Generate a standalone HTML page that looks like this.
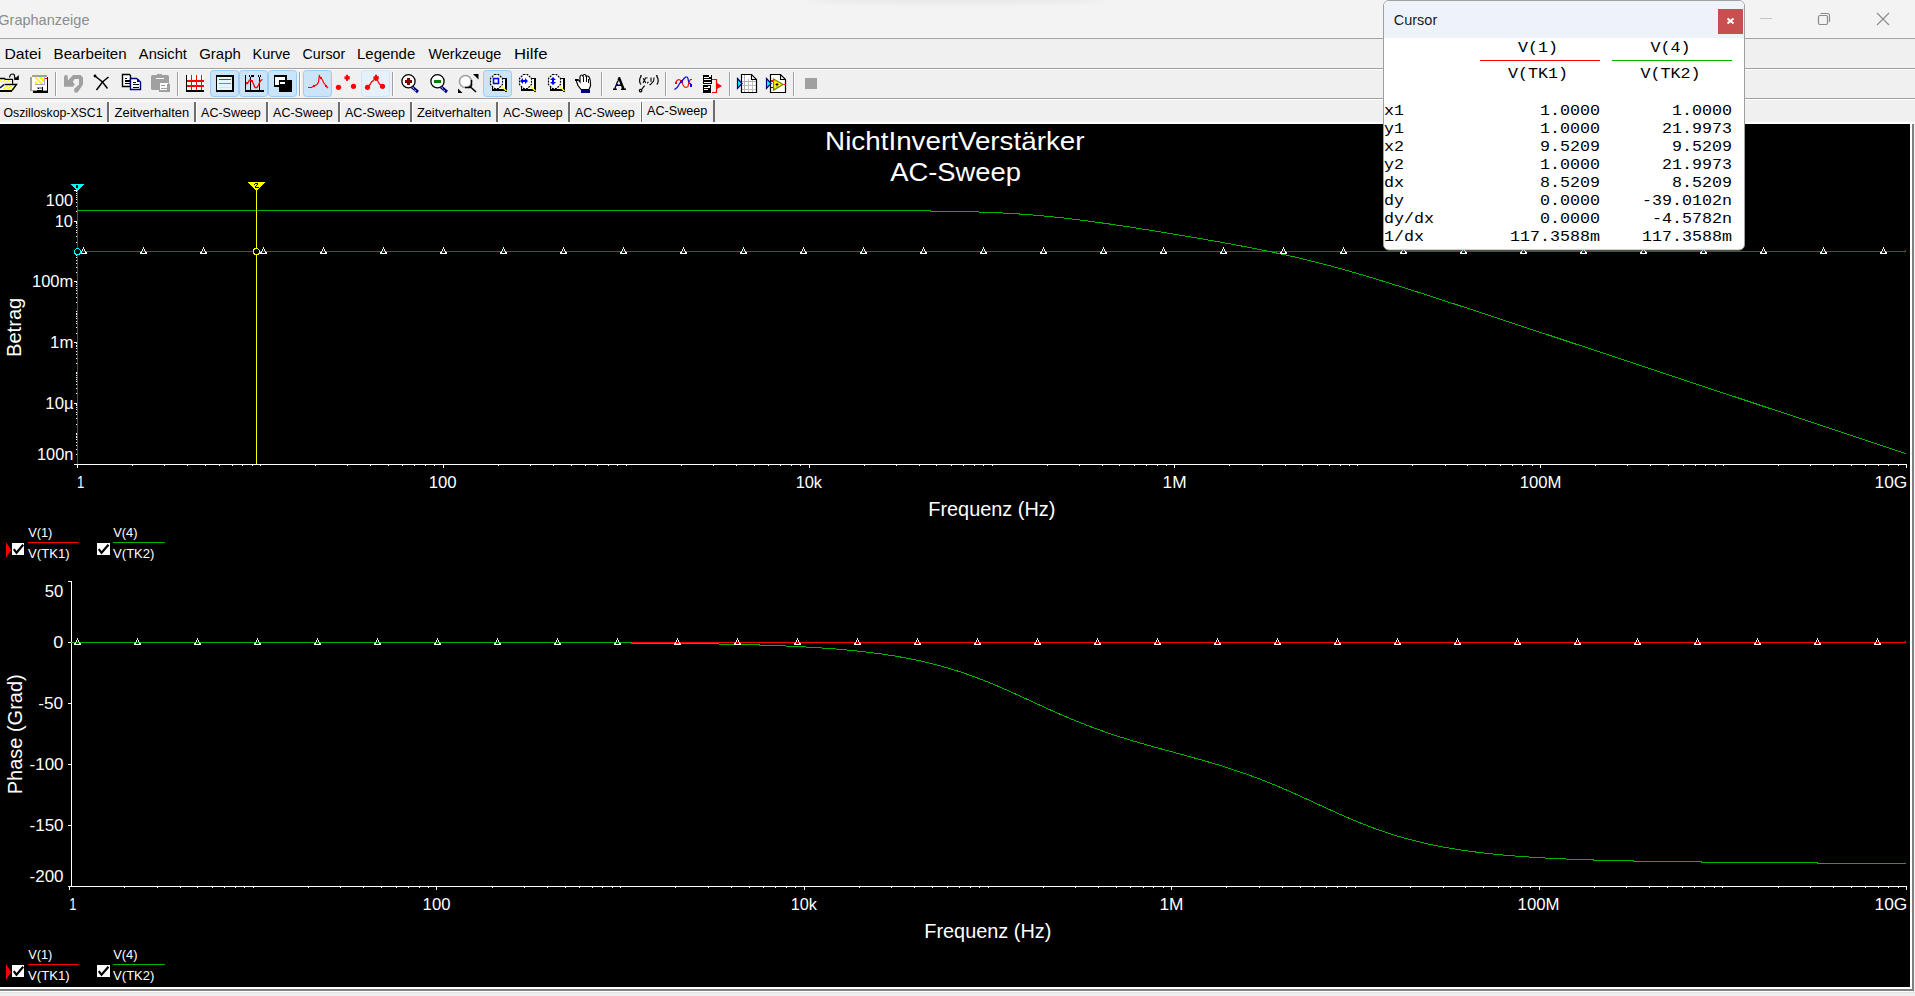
<!DOCTYPE html>
<html><head><meta charset="utf-8"><title>Graphanzeige</title>
<style>html,body{margin:0;padding:0;width:1915px;height:996px;overflow:hidden;background:#f0f0f0}svg{display:block}text{white-space:pre}</style>
</head><body>
<svg width="1915" height="996" viewBox="0 0 1915 996">
<rect x="0" y="0" width="1915" height="38" fill="#f3f3f3" />
<rect x="0" y="37" width="1915" height="1" fill="#f7f7f7" />
<defs><filter id="blr" x="-50%" y="-200%" width="200%" height="500%"><feGaussianBlur stdDeviation="4 3"/></filter></defs>
<ellipse cx="955" cy="-1" rx="150" ry="4" fill="#000" opacity="0.05" filter="url(#blr)"/>
<rect x="0" y="38" width="1915" height="1" fill="#a0a0a0" />
<rect x="0" y="39" width="1915" height="29" fill="#f0f0f0" />
<text x="-1.73" y="25" font-family="Liberation Sans" font-size="15" fill="#8c8c8c" textLength="91.17" lengthAdjust="spacingAndGlyphs" >Graphanzeige</text>
<rect x="1760" y="18" width="12" height="1" fill="#c5c5c5" />
<path d="M1820.5 13.5 H1827.5 A2 2 0 0 1 1829.5 15.5 V22" fill="none" stroke="#8a8a8a" stroke-width="1.1"/>
<rect x="1818.5" y="15.5" width="9" height="9" rx="1.5" fill="none" stroke="#8a8a8a" stroke-width="1.2"/>
<path d="M1877 13 L1889 25 M1889 13 L1877 25" stroke="#8a8a8a" stroke-width="1.1"/>
<text x="4.51" y="59" font-family="Liberation Sans" font-size="15" fill="#000000" textLength="36.75" lengthAdjust="spacingAndGlyphs" >Datei</text>
<text x="53.56" y="59" font-family="Liberation Sans" font-size="15" fill="#000000" textLength="73.12" lengthAdjust="spacingAndGlyphs" >Bearbeiten</text>
<text x="138.87" y="59" font-family="Liberation Sans" font-size="15" fill="#000000" textLength="48.04" lengthAdjust="spacingAndGlyphs" >Ansicht</text>
<text x="199.25" y="59" font-family="Liberation Sans" font-size="15" fill="#000000" textLength="41.52" lengthAdjust="spacingAndGlyphs" >Graph</text>
<text x="252.51" y="59" font-family="Liberation Sans" font-size="15" fill="#000000" textLength="37.94" lengthAdjust="spacingAndGlyphs" >Kurve</text>
<text x="302.48" y="59" font-family="Liberation Sans" font-size="15" fill="#000000" textLength="42.76" lengthAdjust="spacingAndGlyphs" >Cursor</text>
<text x="357.07" y="59" font-family="Liberation Sans" font-size="15" fill="#000000" textLength="58.19" lengthAdjust="spacingAndGlyphs" >Legende</text>
<text x="428.44" y="59" font-family="Liberation Sans" font-size="15" fill="#000000" textLength="72.90" lengthAdjust="spacingAndGlyphs" >Werkzeuge</text>
<text x="514.03" y="59" font-family="Liberation Sans" font-size="15" fill="#000000" textLength="33.41" lengthAdjust="spacingAndGlyphs" >Hilfe</text>
<rect x="0" y="68" width="1915" height="1" fill="#a0a0a0" />
<rect x="0" y="69" width="1915" height="1" fill="#ffffff" />
<rect x="0" y="70" width="1915" height="28" fill="#f0f0f0" />
<rect x="0" y="98" width="1915" height="1" fill="#a0a0a0" />
<rect x="0" y="99" width="1915" height="1" fill="#ffffff" />
<rect x="0" y="100" width="1915" height="24" fill="#f0f0f0" />
<rect x="0" y="101" width="640" height="1" fill="#ffffff" />
<text x="3.52" y="117" font-family="Liberation Sans" font-size="13" fill="#000000" textLength="98.98" lengthAdjust="spacingAndGlyphs" >Oszilloskop-XSC1</text>
<rect x="107" y="102" width="2" height="20" fill="#6d6d6d" />
<rect x="109" y="102" width="1" height="20" fill="#ffffff" />
<text x="114.59" y="117" font-family="Liberation Sans" font-size="13" fill="#000000" textLength="74.55" lengthAdjust="spacingAndGlyphs" >Zeitverhalten</text>
<rect x="194" y="102" width="2" height="20" fill="#6d6d6d" />
<rect x="196" y="102" width="1" height="20" fill="#ffffff" />
<text x="201.08" y="117" font-family="Liberation Sans" font-size="13" fill="#000000" textLength="59.75" lengthAdjust="spacingAndGlyphs" >AC-Sweep</text>
<rect x="266" y="102" width="2" height="20" fill="#6d6d6d" />
<rect x="268" y="102" width="1" height="20" fill="#ffffff" />
<text x="273.08" y="117" font-family="Liberation Sans" font-size="13" fill="#000000" textLength="59.75" lengthAdjust="spacingAndGlyphs" >AC-Sweep</text>
<rect x="338" y="102" width="2" height="20" fill="#6d6d6d" />
<rect x="340" y="102" width="1" height="20" fill="#ffffff" />
<text x="344.98" y="117" font-family="Liberation Sans" font-size="13" fill="#000000" textLength="60.05" lengthAdjust="spacingAndGlyphs" >AC-Sweep</text>
<rect x="410" y="102" width="2" height="20" fill="#6d6d6d" />
<rect x="412" y="102" width="1" height="20" fill="#ffffff" />
<text x="416.89" y="117" font-family="Liberation Sans" font-size="13" fill="#000000" textLength="74.24" lengthAdjust="spacingAndGlyphs" >Zeitverhalten</text>
<rect x="496" y="102" width="2" height="20" fill="#6d6d6d" />
<rect x="498" y="102" width="1" height="20" fill="#ffffff" />
<text x="503.28" y="117" font-family="Liberation Sans" font-size="13" fill="#000000" textLength="59.45" lengthAdjust="spacingAndGlyphs" >AC-Sweep</text>
<rect x="568" y="102" width="2" height="20" fill="#6d6d6d" />
<rect x="570" y="102" width="1" height="20" fill="#ffffff" />
<text x="574.98" y="117" font-family="Liberation Sans" font-size="13" fill="#000000" textLength="59.75" lengthAdjust="spacingAndGlyphs" >AC-Sweep</text>
<rect x="640" y="102" width="2" height="20" fill="#6d6d6d" />
<rect x="642" y="102" width="1" height="20" fill="#ffffff" />
<rect x="640" y="100" width="74" height="1" fill="#ffffff" />
<rect x="640" y="100" width="1" height="22" fill="#ffffff" />
<text x="646.98" y="115" font-family="Liberation Sans" font-size="13" fill="#000000" textLength="60.35" lengthAdjust="spacingAndGlyphs" >AC-Sweep</text>
<rect x="713" y="100" width="2" height="22" fill="#6d6d6d" />
<rect x="0" y="122" width="1915" height="2" fill="#ffffff" />
<rect x="0" y="124" width="1910" height="863" fill="#000000" />
<rect x="1910" y="124" width="2" height="865" fill="#ffffff" />
<rect x="1912" y="124" width="2" height="867" fill="#808080" />
<rect x="0" y="987" width="1912" height="2" fill="#ffffff" />
<rect x="0" y="989" width="1914" height="2" fill="#808080" />
<rect x="0" y="991" width="1915" height="1" fill="#ffffff" />
<rect x="0" y="992" width="1915" height="1" fill="#e3e3e3" />
<rect x="0" y="993" width="1915" height="3" fill="#f0f0f0" />
<text x="825.13" y="150" font-family="Liberation Sans" font-size="26" fill="#ffffff" textLength="259.42" lengthAdjust="spacingAndGlyphs" >NichtInvertVerstärker</text>
<text x="890.25" y="181" font-family="Liberation Sans" font-size="26" fill="#ffffff" textLength="130.70" lengthAdjust="spacingAndGlyphs" >AC-Sweep</text>
<rect x="74" y="464" width="1833" height="1" fill="#ffffff" />
<rect x="77" y="465" width="1" height="3" fill="#ffffff" />
<rect x="132" y="465" width="1" height="1" fill="#ffffff" />
<rect x="164" y="465" width="1" height="1" fill="#ffffff" />
<rect x="187" y="465" width="1" height="1" fill="#ffffff" />
<rect x="205" y="465" width="1" height="1" fill="#ffffff" />
<rect x="219" y="465" width="1" height="1" fill="#ffffff" />
<rect x="232" y="465" width="1" height="1" fill="#ffffff" />
<rect x="242" y="465" width="1" height="1" fill="#ffffff" />
<rect x="252" y="465" width="1" height="1" fill="#ffffff" />
<rect x="260" y="465" width="1" height="1" fill="#ffffff" />
<rect x="315" y="465" width="1" height="1" fill="#ffffff" />
<rect x="347" y="465" width="1" height="1" fill="#ffffff" />
<rect x="370" y="465" width="1" height="1" fill="#ffffff" />
<rect x="388" y="465" width="1" height="1" fill="#ffffff" />
<rect x="402" y="465" width="1" height="1" fill="#ffffff" />
<rect x="414" y="465" width="1" height="1" fill="#ffffff" />
<rect x="425" y="465" width="1" height="1" fill="#ffffff" />
<rect x="434" y="465" width="1" height="1" fill="#ffffff" />
<rect x="443" y="465" width="1" height="3" fill="#ffffff" />
<rect x="498" y="465" width="1" height="1" fill="#ffffff" />
<rect x="530" y="465" width="1" height="1" fill="#ffffff" />
<rect x="553" y="465" width="1" height="1" fill="#ffffff" />
<rect x="571" y="465" width="1" height="1" fill="#ffffff" />
<rect x="585" y="465" width="1" height="1" fill="#ffffff" />
<rect x="597" y="465" width="1" height="1" fill="#ffffff" />
<rect x="608" y="465" width="1" height="1" fill="#ffffff" />
<rect x="617" y="465" width="1" height="1" fill="#ffffff" />
<rect x="626" y="465" width="1" height="1" fill="#ffffff" />
<rect x="681" y="465" width="1" height="1" fill="#ffffff" />
<rect x="713" y="465" width="1" height="1" fill="#ffffff" />
<rect x="736" y="465" width="1" height="1" fill="#ffffff" />
<rect x="754" y="465" width="1" height="1" fill="#ffffff" />
<rect x="768" y="465" width="1" height="1" fill="#ffffff" />
<rect x="780" y="465" width="1" height="1" fill="#ffffff" />
<rect x="791" y="465" width="1" height="1" fill="#ffffff" />
<rect x="800" y="465" width="1" height="1" fill="#ffffff" />
<rect x="809" y="465" width="1" height="3" fill="#ffffff" />
<rect x="864" y="465" width="1" height="1" fill="#ffffff" />
<rect x="896" y="465" width="1" height="1" fill="#ffffff" />
<rect x="919" y="465" width="1" height="1" fill="#ffffff" />
<rect x="936" y="465" width="1" height="1" fill="#ffffff" />
<rect x="951" y="465" width="1" height="1" fill="#ffffff" />
<rect x="963" y="465" width="1" height="1" fill="#ffffff" />
<rect x="974" y="465" width="1" height="1" fill="#ffffff" />
<rect x="983" y="465" width="1" height="1" fill="#ffffff" />
<rect x="992" y="465" width="1" height="1" fill="#ffffff" />
<rect x="1047" y="465" width="1" height="1" fill="#ffffff" />
<rect x="1079" y="465" width="1" height="1" fill="#ffffff" />
<rect x="1102" y="465" width="1" height="1" fill="#ffffff" />
<rect x="1119" y="465" width="1" height="1" fill="#ffffff" />
<rect x="1134" y="465" width="1" height="1" fill="#ffffff" />
<rect x="1146" y="465" width="1" height="1" fill="#ffffff" />
<rect x="1157" y="465" width="1" height="1" fill="#ffffff" />
<rect x="1166" y="465" width="1" height="1" fill="#ffffff" />
<rect x="1174" y="465" width="1" height="3" fill="#ffffff" />
<rect x="1229" y="465" width="1" height="1" fill="#ffffff" />
<rect x="1262" y="465" width="1" height="1" fill="#ffffff" />
<rect x="1285" y="465" width="1" height="1" fill="#ffffff" />
<rect x="1302" y="465" width="1" height="1" fill="#ffffff" />
<rect x="1317" y="465" width="1" height="1" fill="#ffffff" />
<rect x="1329" y="465" width="1" height="1" fill="#ffffff" />
<rect x="1340" y="465" width="1" height="1" fill="#ffffff" />
<rect x="1349" y="465" width="1" height="1" fill="#ffffff" />
<rect x="1357" y="465" width="1" height="1" fill="#ffffff" />
<rect x="1412" y="465" width="1" height="1" fill="#ffffff" />
<rect x="1445" y="465" width="1" height="1" fill="#ffffff" />
<rect x="1467" y="465" width="1" height="1" fill="#ffffff" />
<rect x="1485" y="465" width="1" height="1" fill="#ffffff" />
<rect x="1500" y="465" width="1" height="1" fill="#ffffff" />
<rect x="1512" y="465" width="1" height="1" fill="#ffffff" />
<rect x="1522" y="465" width="1" height="1" fill="#ffffff" />
<rect x="1532" y="465" width="1" height="1" fill="#ffffff" />
<rect x="1540" y="465" width="1" height="3" fill="#ffffff" />
<rect x="1595" y="465" width="1" height="1" fill="#ffffff" />
<rect x="1627" y="465" width="1" height="1" fill="#ffffff" />
<rect x="1650" y="465" width="1" height="1" fill="#ffffff" />
<rect x="1668" y="465" width="1" height="1" fill="#ffffff" />
<rect x="1683" y="465" width="1" height="1" fill="#ffffff" />
<rect x="1695" y="465" width="1" height="1" fill="#ffffff" />
<rect x="1705" y="465" width="1" height="1" fill="#ffffff" />
<rect x="1715" y="465" width="1" height="1" fill="#ffffff" />
<rect x="1723" y="465" width="1" height="1" fill="#ffffff" />
<rect x="1778" y="465" width="1" height="1" fill="#ffffff" />
<rect x="1810" y="465" width="1" height="1" fill="#ffffff" />
<rect x="1833" y="465" width="1" height="1" fill="#ffffff" />
<rect x="1851" y="465" width="1" height="1" fill="#ffffff" />
<rect x="1865" y="465" width="1" height="1" fill="#ffffff" />
<rect x="1878" y="465" width="1" height="1" fill="#ffffff" />
<rect x="1888" y="465" width="1" height="1" fill="#ffffff" />
<rect x="1898" y="465" width="1" height="1" fill="#ffffff" />
<rect x="1906" y="465" width="1" height="3" fill="#ffffff" />
<rect x="74" y="464" width="3" height="1" fill="#ffffff" />
<rect x="76" y="454" width="1" height="1" fill="#ffffff" />
<rect x="76" y="449" width="1" height="1" fill="#ffffff" />
<rect x="76" y="445" width="1" height="1" fill="#ffffff" />
<rect x="76" y="442" width="1" height="1" fill="#ffffff" />
<rect x="76" y="439" width="1" height="1" fill="#ffffff" />
<rect x="76" y="437" width="1" height="1" fill="#ffffff" />
<rect x="76" y="436" width="1" height="1" fill="#ffffff" />
<rect x="76" y="434" width="1" height="1" fill="#ffffff" />
<rect x="76" y="433" width="1" height="1" fill="#ffffff" />
<rect x="76" y="424" width="1" height="1" fill="#ffffff" />
<rect x="76" y="418" width="1" height="1" fill="#ffffff" />
<rect x="76" y="414" width="1" height="1" fill="#ffffff" />
<rect x="76" y="412" width="1" height="1" fill="#ffffff" />
<rect x="76" y="409" width="1" height="1" fill="#ffffff" />
<rect x="76" y="407" width="1" height="1" fill="#ffffff" />
<rect x="76" y="405" width="1" height="1" fill="#ffffff" />
<rect x="76" y="404" width="1" height="1" fill="#ffffff" />
<rect x="74" y="403" width="3" height="1" fill="#ffffff" />
<rect x="76" y="393" width="1" height="1" fill="#ffffff" />
<rect x="76" y="388" width="1" height="1" fill="#ffffff" />
<rect x="76" y="384" width="1" height="1" fill="#ffffff" />
<rect x="76" y="381" width="1" height="1" fill="#ffffff" />
<rect x="76" y="379" width="1" height="1" fill="#ffffff" />
<rect x="76" y="377" width="1" height="1" fill="#ffffff" />
<rect x="76" y="375" width="1" height="1" fill="#ffffff" />
<rect x="76" y="373" width="1" height="1" fill="#ffffff" />
<rect x="76" y="372" width="1" height="1" fill="#ffffff" />
<rect x="76" y="363" width="1" height="1" fill="#ffffff" />
<rect x="76" y="358" width="1" height="1" fill="#ffffff" />
<rect x="76" y="354" width="1" height="1" fill="#ffffff" />
<rect x="76" y="351" width="1" height="1" fill="#ffffff" />
<rect x="76" y="348" width="1" height="1" fill="#ffffff" />
<rect x="76" y="346" width="1" height="1" fill="#ffffff" />
<rect x="76" y="345" width="1" height="1" fill="#ffffff" />
<rect x="76" y="343" width="1" height="1" fill="#ffffff" />
<rect x="74" y="342" width="3" height="1" fill="#ffffff" />
<rect x="76" y="333" width="1" height="1" fill="#ffffff" />
<rect x="76" y="327" width="1" height="1" fill="#ffffff" />
<rect x="76" y="323" width="1" height="1" fill="#ffffff" />
<rect x="76" y="321" width="1" height="1" fill="#ffffff" />
<rect x="76" y="318" width="1" height="1" fill="#ffffff" />
<rect x="76" y="316" width="1" height="1" fill="#ffffff" />
<rect x="76" y="314" width="1" height="1" fill="#ffffff" />
<rect x="76" y="313" width="1" height="1" fill="#ffffff" />
<rect x="76" y="311" width="1" height="1" fill="#ffffff" />
<rect x="76" y="302" width="1" height="1" fill="#ffffff" />
<rect x="76" y="297" width="1" height="1" fill="#ffffff" />
<rect x="76" y="293" width="1" height="1" fill="#ffffff" />
<rect x="76" y="290" width="1" height="1" fill="#ffffff" />
<rect x="76" y="288" width="1" height="1" fill="#ffffff" />
<rect x="76" y="286" width="1" height="1" fill="#ffffff" />
<rect x="76" y="284" width="1" height="1" fill="#ffffff" />
<rect x="76" y="282" width="1" height="1" fill="#ffffff" />
<rect x="74" y="281" width="3" height="1" fill="#ffffff" />
<rect x="76" y="272" width="1" height="1" fill="#ffffff" />
<rect x="76" y="267" width="1" height="1" fill="#ffffff" />
<rect x="76" y="263" width="1" height="1" fill="#ffffff" />
<rect x="76" y="260" width="1" height="1" fill="#ffffff" />
<rect x="76" y="257" width="1" height="1" fill="#ffffff" />
<rect x="76" y="255" width="1" height="1" fill="#ffffff" />
<rect x="76" y="254" width="1" height="1" fill="#ffffff" />
<rect x="76" y="252" width="1" height="1" fill="#ffffff" />
<rect x="76" y="251" width="1" height="1" fill="#ffffff" />
<rect x="76" y="242" width="1" height="1" fill="#ffffff" />
<rect x="76" y="236" width="1" height="1" fill="#ffffff" />
<rect x="76" y="232" width="1" height="1" fill="#ffffff" />
<rect x="76" y="230" width="1" height="1" fill="#ffffff" />
<rect x="76" y="227" width="1" height="1" fill="#ffffff" />
<rect x="76" y="225" width="1" height="1" fill="#ffffff" />
<rect x="76" y="223" width="1" height="1" fill="#ffffff" />
<rect x="76" y="222" width="1" height="1" fill="#ffffff" />
<rect x="74" y="221" width="3" height="1" fill="#ffffff" />
<rect x="76" y="211" width="1" height="1" fill="#ffffff" />
<rect x="76" y="206" width="1" height="1" fill="#ffffff" />
<rect x="76" y="202" width="1" height="1" fill="#ffffff" />
<rect x="76" y="199" width="1" height="1" fill="#ffffff" />
<rect x="76" y="197" width="1" height="1" fill="#ffffff" />
<rect x="76" y="195" width="1" height="1" fill="#ffffff" />
<rect x="76" y="193" width="1" height="1" fill="#ffffff" />
<rect x="76" y="191" width="1" height="1" fill="#ffffff" />
<rect x="74" y="190" width="3" height="1" fill="#ffffff" />
<text x="45.86" y="206" font-family="Liberation Sans" font-size="16" fill="#ffffff" textLength="27.18" lengthAdjust="spacingAndGlyphs" >100</text>
<text x="54.65" y="227" font-family="Liberation Sans" font-size="16" fill="#ffffff" textLength="18.18" lengthAdjust="spacingAndGlyphs" >10</text>
<text x="31.94" y="287" font-family="Liberation Sans" font-size="16" fill="#ffffff" textLength="41.35" lengthAdjust="spacingAndGlyphs" >100m</text>
<text x="50.12" y="348" font-family="Liberation Sans" font-size="16" fill="#ffffff" textLength="23.28" lengthAdjust="spacingAndGlyphs" >1m</text>
<text x="45.33" y="409" font-family="Liberation Sans" font-size="16" fill="#ffffff" textLength="28.26" lengthAdjust="spacingAndGlyphs" >10µ</text>
<text x="37.06" y="460" font-family="Liberation Sans" font-size="16" fill="#ffffff" textLength="36.30" lengthAdjust="spacingAndGlyphs" >100n</text>
<text x="76.99" y="488" font-family="Liberation Sans" font-size="16" fill="#ffffff" textLength="7.35" lengthAdjust="spacingAndGlyphs" >1</text>
<text x="428.72" y="488" font-family="Liberation Sans" font-size="16" fill="#ffffff" textLength="27.93" lengthAdjust="spacingAndGlyphs" >100</text>
<text x="795.65" y="488" font-family="Liberation Sans" font-size="16" fill="#ffffff" textLength="26.42" lengthAdjust="spacingAndGlyphs" >10k</text>
<text x="1162.58" y="488" font-family="Liberation Sans" font-size="16" fill="#ffffff" textLength="24.04" lengthAdjust="spacingAndGlyphs" >1M</text>
<text x="1519.73" y="488" font-family="Liberation Sans" font-size="16" fill="#ffffff" textLength="41.74" lengthAdjust="spacingAndGlyphs" >100M</text>
<text x="1874.58" y="488" font-family="Liberation Sans" font-size="16" fill="#ffffff" textLength="32.71" lengthAdjust="spacingAndGlyphs" >10G</text>
<text x="928.27" y="516" font-family="Liberation Sans" font-size="20" fill="#ffffff" textLength="127.06" lengthAdjust="spacingAndGlyphs" >Frequenz (Hz)</text>
<text x="-357.05" y="21.3" font-family="Liberation Sans" font-size="21" fill="#ffffff" textLength="59.35" lengthAdjust="spacingAndGlyphs" transform="rotate(-90)">Betrag</text>
<rect x="77" y="251" width="1829" height="1" fill="#ff0000" />
<rect x="1905" y="250" width="1" height="1" fill="#ff0000" />
<rect x="77" y="190" width="1" height="274" fill="#ff0000" />
<polyline points="77.00,210.53 79.50,210.53 81.50,210.53 83.50,210.53 85.50,210.53 87.50,210.53 89.50,210.53 91.50,210.53 93.50,210.53 95.50,210.53 97.50,210.53 99.50,210.53 101.50,210.53 103.50,210.53 105.50,210.53 107.50,210.53 109.50,210.53 111.50,210.53 113.50,210.53 115.50,210.53 117.50,210.53 119.50,210.53 121.50,210.53 123.50,210.53 125.50,210.53 127.50,210.53 129.50,210.53 131.50,210.53 133.50,210.53 135.50,210.53 137.50,210.53 139.50,210.53 141.50,210.53 143.50,210.53 145.50,210.53 147.50,210.53 149.50,210.53 151.50,210.53 153.50,210.53 155.50,210.53 157.50,210.53 159.50,210.53 161.50,210.53 163.50,210.53 165.50,210.53 167.50,210.53 169.50,210.53 171.50,210.53 173.50,210.53 175.50,210.53 177.50,210.53 179.50,210.53 181.50,210.53 183.50,210.53 185.50,210.53 187.50,210.53 189.50,210.53 191.50,210.53 193.50,210.53 195.50,210.53 197.50,210.53 199.50,210.53 201.50,210.53 203.50,210.53 205.50,210.53 207.50,210.53 209.50,210.53 211.50,210.53 213.50,210.53 215.50,210.53 217.50,210.53 219.50,210.53 221.50,210.53 223.50,210.53 225.50,210.53 227.50,210.53 229.50,210.53 231.50,210.53 233.50,210.53 235.50,210.53 237.50,210.53 239.50,210.53 241.50,210.53 243.50,210.53 245.50,210.53 247.50,210.53 249.50,210.53 251.50,210.53 253.50,210.53 255.50,210.53 257.50,210.53 259.50,210.53 261.50,210.53 263.50,210.53 265.50,210.53 267.50,210.53 269.50,210.53 271.50,210.53 273.50,210.53 275.50,210.53 277.50,210.53 279.50,210.53 281.50,210.53 283.50,210.53 285.50,210.53 287.50,210.53 289.50,210.53 291.50,210.53 293.50,210.53 295.50,210.53 297.50,210.53 299.50,210.53 301.50,210.53 303.50,210.53 305.50,210.53 307.50,210.53 309.50,210.53 311.50,210.53 313.50,210.53 315.50,210.53 317.50,210.53 319.50,210.53 321.50,210.53 323.50,210.53 325.50,210.53 327.50,210.53 329.50,210.53 331.50,210.53 333.50,210.53 335.50,210.53 337.50,210.53 339.50,210.53 341.50,210.53 343.50,210.53 345.50,210.53 347.50,210.53 349.50,210.53 351.50,210.53 353.50,210.53 355.50,210.53 357.50,210.53 359.50,210.53 361.50,210.53 363.50,210.53 365.50,210.53 367.50,210.53 369.50,210.53 371.50,210.53 373.50,210.53 375.50,210.53 377.50,210.53 379.50,210.53 381.50,210.53 383.50,210.53 385.50,210.53 387.50,210.53 389.50,210.53 391.50,210.53 393.50,210.53 395.50,210.53 397.50,210.53 399.50,210.53 401.50,210.53 403.50,210.53 405.50,210.53 407.50,210.53 409.50,210.53 411.50,210.53 413.50,210.53 415.50,210.53 417.50,210.53 419.50,210.53 421.50,210.53 423.50,210.53 425.50,210.53 427.50,210.53 429.50,210.53 431.50,210.53 433.50,210.53 435.50,210.53 437.50,210.53 439.50,210.53 441.50,210.53 443.50,210.53 445.50,210.53 447.50,210.53 449.50,210.53 451.50,210.53 453.50,210.53 455.50,210.53 457.50,210.53 459.50,210.53 461.50,210.53 463.50,210.53 465.50,210.53 467.50,210.53 469.50,210.53 471.50,210.53 473.50,210.53 475.50,210.53 477.50,210.53 479.50,210.53 481.50,210.53 483.50,210.53 485.50,210.53 487.50,210.53 489.50,210.53 491.50,210.53 493.50,210.53 495.50,210.53 497.50,210.53 499.50,210.53 501.50,210.53 503.50,210.53 505.50,210.53 507.50,210.53 509.50,210.53 511.50,210.53 513.50,210.53 515.50,210.53 517.50,210.53 519.50,210.53 521.50,210.53 523.50,210.53 525.50,210.53 527.50,210.53 529.50,210.53 531.50,210.53 533.50,210.53 535.50,210.53 537.50,210.53 539.50,210.53 541.50,210.53 543.50,210.53 545.50,210.53 547.50,210.53 549.50,210.53 551.50,210.53 553.50,210.53 555.50,210.53 557.50,210.53 559.50,210.53 561.50,210.53 563.50,210.53 565.50,210.53 567.50,210.53 569.50,210.53 571.50,210.53 573.50,210.53 575.50,210.53 577.50,210.53 579.50,210.53 581.50,210.53 583.50,210.53 585.50,210.53 587.50,210.53 589.50,210.53 591.50,210.53 593.50,210.53 595.50,210.53 597.50,210.53 599.50,210.53 601.50,210.53 603.50,210.53 605.50,210.53 607.50,210.53 609.50,210.53 611.50,210.53 613.50,210.53 615.50,210.53 617.50,210.53 619.50,210.53 621.50,210.53 623.50,210.53 625.50,210.53 627.50,210.53 629.50,210.53 631.50,210.53 633.50,210.53 635.50,210.53 637.50,210.53 639.50,210.53 641.50,210.53 643.50,210.53 645.50,210.53 647.50,210.53 649.50,210.53 651.50,210.53 653.50,210.53 655.50,210.53 657.50,210.53 659.50,210.53 661.50,210.53 663.50,210.53 665.50,210.53 667.50,210.53 669.50,210.54 671.50,210.54 673.50,210.54 675.50,210.54 677.50,210.54 679.50,210.54 681.50,210.54 683.50,210.54 685.50,210.54 687.50,210.54 689.50,210.54 691.50,210.54 693.50,210.54 695.50,210.54 697.50,210.54 699.50,210.54 701.50,210.54 703.50,210.54 705.50,210.54 707.50,210.54 709.50,210.54 711.50,210.54 713.50,210.54 715.50,210.54 717.50,210.54 719.50,210.54 721.50,210.54 723.50,210.54 725.50,210.54 727.50,210.54 729.50,210.54 731.50,210.54 733.50,210.54 735.50,210.54 737.50,210.54 739.50,210.54 741.50,210.54 743.50,210.54 745.50,210.54 747.50,210.54 749.50,210.54 751.50,210.54 753.50,210.54 755.50,210.54 757.50,210.54 759.50,210.54 761.50,210.54 763.50,210.54 765.50,210.54 767.50,210.54 769.50,210.54 771.50,210.54 773.50,210.54 775.50,210.54 777.50,210.54 779.50,210.55 781.50,210.55 783.50,210.55 785.50,210.55 787.50,210.55 789.50,210.55 791.50,210.55 793.50,210.55 795.50,210.55 797.50,210.55 799.50,210.55 801.50,210.55 803.50,210.55 805.50,210.56 807.50,210.56 809.50,210.56 811.50,210.56 813.50,210.56 815.50,210.56 817.50,210.56 819.50,210.56 821.50,210.57 823.50,210.57 825.50,210.57 827.50,210.57 829.50,210.57 831.50,210.57 833.50,210.58 835.50,210.58 837.50,210.58 839.50,210.58 841.50,210.59 843.50,210.59 845.50,210.59 847.50,210.59 849.50,210.60 851.50,210.60 853.50,210.60 855.50,210.61 857.50,210.61 859.50,210.62 861.50,210.62 863.50,210.62 865.50,210.63 867.50,210.63 869.50,210.64 871.50,210.64 873.50,210.65 875.50,210.66 877.50,210.66 879.50,210.67 881.50,210.67 883.50,210.68 885.50,210.69 887.50,210.70 889.50,210.71 891.50,210.71 893.50,210.72 895.50,210.73 897.50,210.74 899.50,210.75 901.50,210.76 903.50,210.78 905.50,210.79 907.50,210.80 909.50,210.82 911.50,210.83 913.50,210.84 915.50,210.86 917.50,210.88 919.50,210.89 921.50,210.91 923.50,210.93 925.50,210.95 927.50,210.97 929.50,210.99 931.50,211.02 933.50,211.04 935.50,211.06 937.50,211.09 939.50,211.12 941.50,211.15 943.50,211.18 945.50,211.21 947.50,211.24 949.50,211.28 951.50,211.31 953.50,211.35 955.50,211.39 957.50,211.43 959.50,211.47 961.50,211.52 963.50,211.57 965.50,211.62 967.50,211.67 969.50,211.72 971.50,211.78 973.50,211.83 975.50,211.89 977.50,211.96 979.50,212.02 981.50,212.09 983.50,212.16 985.50,212.24 987.50,212.31 989.50,212.39 991.50,212.48 993.50,212.56 995.50,212.65 997.50,212.75 999.50,212.84 1001.50,212.94 1003.50,213.05 1005.50,213.15 1007.50,213.26 1009.50,213.38 1011.50,213.50 1013.50,213.62 1015.50,213.75 1017.50,213.88 1019.50,214.01 1021.50,214.15 1023.50,214.29 1025.50,214.44 1027.50,214.59 1029.50,214.74 1031.50,214.90 1033.50,215.06 1035.50,215.23 1037.50,215.40 1039.50,215.58 1041.50,215.76 1043.50,215.94 1045.50,216.13 1047.50,216.32 1049.50,216.52 1051.50,216.72 1053.50,216.92 1055.50,217.13 1057.50,217.34 1059.50,217.56 1061.50,217.78 1063.50,218.00 1065.50,218.23 1067.50,218.46 1069.50,218.69 1071.50,218.93 1073.50,219.17 1075.50,219.42 1077.50,219.66 1079.50,219.92 1081.50,220.17 1083.50,220.43 1085.50,220.69 1087.50,220.95 1089.50,221.22 1091.50,221.48 1093.50,221.76 1095.50,222.03 1097.50,222.31 1099.50,222.58 1101.50,222.86 1103.50,223.15 1105.50,223.43 1107.50,223.72 1109.50,224.01 1111.50,224.30 1113.50,224.59 1115.50,224.89 1117.50,225.19 1119.50,225.49 1121.50,225.79 1123.50,226.09 1125.50,226.39 1127.50,226.70 1129.50,227.00 1131.50,227.31 1133.50,227.62 1135.50,227.93 1137.50,228.25 1139.50,228.56 1141.50,228.87 1143.50,229.19 1145.50,229.51 1147.50,229.82 1149.50,230.14 1151.50,230.46 1153.50,230.79 1155.50,231.11 1157.50,231.43 1159.50,231.76 1161.50,232.08 1163.50,232.41 1165.50,232.74 1167.50,233.07 1169.50,233.39 1171.50,233.72 1173.50,234.06 1175.50,234.39 1177.50,234.72 1179.50,235.06 1181.50,235.39 1183.50,235.73 1185.50,236.06 1187.50,236.40 1189.50,236.74 1191.50,237.08 1193.50,237.42 1195.50,237.76 1197.50,238.11 1199.50,238.45 1201.50,238.80 1203.50,239.14 1205.50,239.49 1207.50,239.84 1209.50,240.19 1211.50,240.54 1213.50,240.90 1215.50,241.25 1217.50,241.61 1219.50,241.96 1221.50,242.32 1223.50,242.68 1225.50,243.04 1227.50,243.41 1229.50,243.77 1231.50,244.14 1233.50,244.51 1235.50,244.88 1237.50,245.25 1239.50,245.62 1241.50,246.00 1243.50,246.38 1245.50,246.76 1247.50,247.14 1249.50,247.53 1251.50,247.92 1253.50,248.31 1255.50,248.70 1257.50,249.10 1259.50,249.49 1261.50,249.90 1263.50,250.30 1265.50,250.71 1267.50,251.12 1269.50,251.53 1271.50,251.95 1273.50,252.37 1275.50,252.79 1277.50,253.22 1279.50,253.65 1281.50,254.08 1283.50,254.52 1285.50,254.96 1287.50,255.40 1289.50,255.85 1291.50,256.31 1293.50,256.76 1295.50,257.22 1297.50,257.69 1299.50,258.15 1301.50,258.63 1303.50,259.10 1305.50,259.58 1307.50,260.07 1309.50,260.56 1311.50,261.05 1313.50,261.55 1315.50,262.05 1317.50,262.56 1319.50,263.07 1321.50,263.58 1323.50,264.10 1325.50,264.62 1327.50,265.15 1329.50,265.68 1331.50,266.21 1333.50,266.75 1335.50,267.30 1337.50,267.84 1339.50,268.39 1341.50,268.95 1343.50,269.50 1345.50,270.06 1347.50,270.63 1349.50,271.20 1351.50,271.77 1353.50,272.34 1355.50,272.92 1357.50,273.50 1359.50,274.09 1361.50,274.67 1363.50,275.26 1365.50,275.86 1367.50,276.45 1369.50,277.05 1371.50,277.65 1373.50,278.25 1375.50,278.86 1377.50,279.47 1379.50,280.08 1381.50,280.69 1383.50,281.31 1385.50,281.92 1387.50,282.54 1389.50,283.16 1391.50,283.79 1393.50,284.41 1395.50,285.04 1397.50,285.66 1399.50,286.29 1401.50,286.92 1403.50,287.56 1405.50,288.19 1407.50,288.83 1409.50,289.46 1411.50,290.10 1413.50,290.74 1415.50,291.38 1417.50,292.02 1419.50,292.66 1421.50,293.30 1423.50,293.95 1425.50,294.59 1427.50,295.24 1429.50,295.88 1431.50,296.53 1433.50,297.18 1435.50,297.83 1437.50,298.48 1439.50,299.13 1441.50,299.78 1443.50,300.43 1445.50,301.08 1447.50,301.73 1449.50,302.39 1451.50,303.04 1453.50,303.69 1455.50,304.35 1457.50,305.00 1459.50,305.66 1461.50,306.31 1463.50,306.97 1465.50,307.62 1467.50,308.28 1469.50,308.94 1471.50,309.60 1473.50,310.25 1475.50,310.91 1477.50,311.57 1479.50,312.23 1481.50,312.89 1483.50,313.54 1485.50,314.20 1487.50,314.86 1489.50,315.52 1491.50,316.18 1493.50,316.84 1495.50,317.50 1497.50,318.16 1499.50,318.82 1501.50,319.48 1503.50,320.14 1505.50,320.80 1507.50,321.46 1509.50,322.13 1511.50,322.79 1513.50,323.45 1515.50,324.11 1517.50,324.77 1519.50,325.43 1521.50,326.09 1523.50,326.75 1525.50,327.42 1527.50,328.08 1529.50,328.74 1531.50,329.40 1533.50,330.06 1535.50,330.73 1537.50,331.39 1539.50,332.05 1541.50,332.71 1543.50,333.38 1545.50,334.04 1547.50,334.70 1549.50,335.36 1551.50,336.02 1553.50,336.69 1555.50,337.35 1557.50,338.01 1559.50,338.68 1561.50,339.34 1563.50,340.00 1565.50,340.66 1567.50,341.33 1569.50,341.99 1571.50,342.65 1573.50,343.31 1575.50,343.98 1577.50,344.64 1579.50,345.30 1581.50,345.97 1583.50,346.63 1585.50,347.29 1587.50,347.96 1589.50,348.62 1591.50,349.28 1593.50,349.94 1595.50,350.61 1597.50,351.27 1599.50,351.93 1601.50,352.60 1603.50,353.26 1605.50,353.92 1607.50,354.59 1609.50,355.25 1611.50,355.91 1613.50,356.58 1615.50,357.24 1617.50,357.90 1619.50,358.56 1621.50,359.23 1623.50,359.89 1625.50,360.55 1627.50,361.22 1629.50,361.88 1631.50,362.54 1633.50,363.21 1635.50,363.87 1637.50,364.53 1639.50,365.20 1641.50,365.86 1643.50,366.52 1645.50,367.19 1647.50,367.85 1649.50,368.51 1651.50,369.18 1653.50,369.84 1655.50,370.50 1657.50,371.17 1659.50,371.83 1661.50,372.49 1663.50,373.16 1665.50,373.82 1667.50,374.48 1669.50,375.15 1671.50,375.81 1673.50,376.47 1675.50,377.14 1677.50,377.80 1679.50,378.46 1681.50,379.12 1683.50,379.79 1685.50,380.45 1687.50,381.11 1689.50,381.78 1691.50,382.44 1693.50,383.10 1695.50,383.77 1697.50,384.43 1699.50,385.09 1701.50,385.76 1703.50,386.42 1705.50,387.08 1707.50,387.75 1709.50,388.41 1711.50,389.07 1713.50,389.74 1715.50,390.40 1717.50,391.06 1719.50,391.73 1721.50,392.39 1723.50,393.05 1725.50,393.72 1727.50,394.38 1729.50,395.04 1731.50,395.71 1733.50,396.37 1735.50,397.03 1737.50,397.70 1739.50,398.36 1741.50,399.02 1743.50,399.69 1745.50,400.35 1747.50,401.01 1749.50,401.68 1751.50,402.34 1753.50,403.00 1755.50,403.67 1757.50,404.33 1759.50,404.99 1761.50,405.66 1763.50,406.32 1765.50,406.98 1767.50,407.65 1769.50,408.31 1771.50,408.97 1773.50,409.64 1775.50,410.30 1777.50,410.96 1779.50,411.63 1781.50,412.29 1783.50,412.95 1785.50,413.62 1787.50,414.28 1789.50,414.94 1791.50,415.61 1793.50,416.27 1795.50,416.93 1797.50,417.60 1799.50,418.26 1801.50,418.92 1803.50,419.59 1805.50,420.25 1807.50,420.91 1809.50,421.58 1811.50,422.24 1813.50,422.90 1815.50,423.57 1817.50,424.23 1819.50,424.89 1821.50,425.56 1823.50,426.22 1825.50,426.88 1827.50,427.55 1829.50,428.21 1831.50,428.87 1833.50,429.54 1835.50,430.20 1837.50,430.86 1839.50,431.53 1841.50,432.19 1843.50,432.85 1845.50,433.52 1847.50,434.18 1849.50,434.84 1851.50,435.51 1853.50,436.17 1855.50,436.83 1857.50,437.50 1859.50,438.16 1861.50,438.82 1863.50,439.49 1865.50,440.15 1867.50,440.81 1869.50,441.48 1871.50,442.14 1873.50,442.80 1875.50,443.47 1877.50,444.13 1879.50,444.79 1881.50,445.46 1883.50,446.12 1885.50,446.78 1887.50,447.45 1889.50,448.11 1891.50,448.77 1893.50,449.44 1895.50,450.10 1897.50,450.76 1899.50,451.43 1901.50,452.09 1903.50,452.75 1905.50,453.42 1906.00,453.58" fill="none" stroke="#00b400" stroke-width="1" shape-rendering="crispEdges"/>
<path d="M83.5 248 L86.5 253.5 L80.5 253.5 Z" fill="none" stroke="#ffffff" stroke-width="1" shape-rendering="crispEdges"/>
<path d="M143.5 248 L146.5 253.5 L140.5 253.5 Z" fill="none" stroke="#ffffff" stroke-width="1" shape-rendering="crispEdges"/>
<path d="M203.5 248 L206.5 253.5 L200.5 253.5 Z" fill="none" stroke="#ffffff" stroke-width="1" shape-rendering="crispEdges"/>
<path d="M263.5 248 L266.5 253.5 L260.5 253.5 Z" fill="none" stroke="#ffffff" stroke-width="1" shape-rendering="crispEdges"/>
<path d="M323.5 248 L326.5 253.5 L320.5 253.5 Z" fill="none" stroke="#ffffff" stroke-width="1" shape-rendering="crispEdges"/>
<path d="M383.5 248 L386.5 253.5 L380.5 253.5 Z" fill="none" stroke="#ffffff" stroke-width="1" shape-rendering="crispEdges"/>
<path d="M443.5 248 L446.5 253.5 L440.5 253.5 Z" fill="none" stroke="#ffffff" stroke-width="1" shape-rendering="crispEdges"/>
<path d="M503.5 248 L506.5 253.5 L500.5 253.5 Z" fill="none" stroke="#ffffff" stroke-width="1" shape-rendering="crispEdges"/>
<path d="M563.5 248 L566.5 253.5 L560.5 253.5 Z" fill="none" stroke="#ffffff" stroke-width="1" shape-rendering="crispEdges"/>
<path d="M623.5 248 L626.5 253.5 L620.5 253.5 Z" fill="none" stroke="#ffffff" stroke-width="1" shape-rendering="crispEdges"/>
<path d="M683.5 248 L686.5 253.5 L680.5 253.5 Z" fill="none" stroke="#ffffff" stroke-width="1" shape-rendering="crispEdges"/>
<path d="M743.5 248 L746.5 253.5 L740.5 253.5 Z" fill="none" stroke="#ffffff" stroke-width="1" shape-rendering="crispEdges"/>
<path d="M803.5 248 L806.5 253.5 L800.5 253.5 Z" fill="none" stroke="#ffffff" stroke-width="1" shape-rendering="crispEdges"/>
<path d="M863.5 248 L866.5 253.5 L860.5 253.5 Z" fill="none" stroke="#ffffff" stroke-width="1" shape-rendering="crispEdges"/>
<path d="M923.5 248 L926.5 253.5 L920.5 253.5 Z" fill="none" stroke="#ffffff" stroke-width="1" shape-rendering="crispEdges"/>
<path d="M983.5 248 L986.5 253.5 L980.5 253.5 Z" fill="none" stroke="#ffffff" stroke-width="1" shape-rendering="crispEdges"/>
<path d="M1043.5 248 L1046.5 253.5 L1040.5 253.5 Z" fill="none" stroke="#ffffff" stroke-width="1" shape-rendering="crispEdges"/>
<path d="M1103.5 248 L1106.5 253.5 L1100.5 253.5 Z" fill="none" stroke="#ffffff" stroke-width="1" shape-rendering="crispEdges"/>
<path d="M1163.5 248 L1166.5 253.5 L1160.5 253.5 Z" fill="none" stroke="#ffffff" stroke-width="1" shape-rendering="crispEdges"/>
<path d="M1223.5 248 L1226.5 253.5 L1220.5 253.5 Z" fill="none" stroke="#ffffff" stroke-width="1" shape-rendering="crispEdges"/>
<path d="M1283.5 248 L1286.5 253.5 L1280.5 253.5 Z" fill="none" stroke="#ffffff" stroke-width="1" shape-rendering="crispEdges"/>
<path d="M1343.5 248 L1346.5 253.5 L1340.5 253.5 Z" fill="none" stroke="#ffffff" stroke-width="1" shape-rendering="crispEdges"/>
<path d="M1403.5 248 L1406.5 253.5 L1400.5 253.5 Z" fill="none" stroke="#ffffff" stroke-width="1" shape-rendering="crispEdges"/>
<path d="M1463.5 248 L1466.5 253.5 L1460.5 253.5 Z" fill="none" stroke="#ffffff" stroke-width="1" shape-rendering="crispEdges"/>
<path d="M1523.5 248 L1526.5 253.5 L1520.5 253.5 Z" fill="none" stroke="#ffffff" stroke-width="1" shape-rendering="crispEdges"/>
<path d="M1583.5 248 L1586.5 253.5 L1580.5 253.5 Z" fill="none" stroke="#ffffff" stroke-width="1" shape-rendering="crispEdges"/>
<path d="M1643.5 248 L1646.5 253.5 L1640.5 253.5 Z" fill="none" stroke="#ffffff" stroke-width="1" shape-rendering="crispEdges"/>
<path d="M1703.5 248 L1706.5 253.5 L1700.5 253.5 Z" fill="none" stroke="#ffffff" stroke-width="1" shape-rendering="crispEdges"/>
<path d="M1763.5 248 L1766.5 253.5 L1760.5 253.5 Z" fill="none" stroke="#ffffff" stroke-width="1" shape-rendering="crispEdges"/>
<path d="M1823.5 248 L1826.5 253.5 L1820.5 253.5 Z" fill="none" stroke="#ffffff" stroke-width="1" shape-rendering="crispEdges"/>
<path d="M1883.5 248 L1886.5 253.5 L1880.5 253.5 Z" fill="none" stroke="#ffffff" stroke-width="1" shape-rendering="crispEdges"/>
<rect x="256" y="190" width="1" height="274" fill="#ffff00" />
<path d="M248 182 L265 182 L256.5 191 Z" fill="#ffff00" shape-rendering="crispEdges"/>
<rect x="255" y="183" width="3" height="1" fill="#000000" />
<rect x="254" y="184" width="1" height="1" fill="#000000" />
<rect x="257" y="184" width="1" height="1" fill="#000000" />
<rect x="256" y="185" width="1" height="1" fill="#000000" />
<rect x="255" y="186" width="1" height="1" fill="#000000" />
<rect x="255" y="187" width="4" height="1" fill="#000000" />
<circle cx="256.5" cy="251.5" r="3" fill="#000" stroke="#ffff00" stroke-width="1" shape-rendering="crispEdges"/>
<path d="M71 184 L84 184 L77.5 191 Z" fill="#00ffff" shape-rendering="crispEdges"/>
<rect x="76" y="185" width="2" height="3" fill="#000000" />
<circle cx="77.5" cy="251.5" r="3" fill="#000" stroke="#00ffff" stroke-width="1" shape-rendering="crispEdges"/>
<path d="M6 542 L11 550 L6 558 Z" fill="#ff0000"/>
<rect x="12" y="543" width="12" height="12" fill="#ffffff" />
<path d="M13.8 549.2 L16.5 552.8 L23.2 544.8" fill="none" stroke="#000" stroke-width="2.2"/>
<text x="28.14" y="537" font-family="Liberation Sans" font-size="13" fill="#ffffff" textLength="24.15" lengthAdjust="spacingAndGlyphs" >V(1)</text>
<rect x="28" y="542" width="51" height="1" fill="#ff0000" />
<text x="28.14" y="558" font-family="Liberation Sans" font-size="13" fill="#ffffff" textLength="41.47" lengthAdjust="spacingAndGlyphs" >V(TK1)</text>
<rect x="97" y="543" width="13" height="12" fill="#ffffff" />
<path d="M98.8 549.2 L101.5 552.8 L108.5 544.8" fill="none" stroke="#000" stroke-width="2.2"/>
<text x="113.14" y="537" font-family="Liberation Sans" font-size="13" fill="#ffffff" textLength="24.36" lengthAdjust="spacingAndGlyphs" >V(4)</text>
<rect x="113" y="542" width="52" height="1" fill="#00b400" />
<text x="113.14" y="558" font-family="Liberation Sans" font-size="13" fill="#ffffff" textLength="41.27" lengthAdjust="spacingAndGlyphs" >V(TK2)</text>
<path d="M6 964 L11 972 L6 980 Z" fill="#ff0000"/>
<rect x="12" y="965" width="12" height="12" fill="#ffffff" />
<path d="M13.8 971.2 L16.5 974.8 L23.2 966.8" fill="none" stroke="#000" stroke-width="2.2"/>
<text x="28.14" y="959" font-family="Liberation Sans" font-size="13" fill="#ffffff" textLength="24.15" lengthAdjust="spacingAndGlyphs" >V(1)</text>
<rect x="28" y="964" width="51" height="1" fill="#ff0000" />
<text x="28.14" y="980" font-family="Liberation Sans" font-size="13" fill="#ffffff" textLength="41.47" lengthAdjust="spacingAndGlyphs" >V(TK1)</text>
<rect x="97" y="965" width="13" height="12" fill="#ffffff" />
<path d="M98.8 971.2 L101.5 974.8 L108.5 966.8" fill="none" stroke="#000" stroke-width="2.2"/>
<text x="113.14" y="959" font-family="Liberation Sans" font-size="13" fill="#ffffff" textLength="24.36" lengthAdjust="spacingAndGlyphs" >V(4)</text>
<rect x="113" y="964" width="52" height="1" fill="#00b400" />
<text x="113.14" y="980" font-family="Liberation Sans" font-size="13" fill="#ffffff" textLength="41.27" lengthAdjust="spacingAndGlyphs" >V(TK2)</text>
<rect x="71" y="581" width="1" height="306" fill="#ffffff" />
<rect x="68" y="886" width="1839" height="1" fill="#ffffff" />
<rect x="69" y="887" width="1" height="3" fill="#ffffff" />
<rect x="124" y="887" width="1" height="1" fill="#ffffff" />
<rect x="157" y="887" width="1" height="1" fill="#ffffff" />
<rect x="180" y="887" width="1" height="1" fill="#ffffff" />
<rect x="197" y="887" width="1" height="1" fill="#ffffff" />
<rect x="212" y="887" width="1" height="1" fill="#ffffff" />
<rect x="224" y="887" width="1" height="1" fill="#ffffff" />
<rect x="235" y="887" width="1" height="1" fill="#ffffff" />
<rect x="244" y="887" width="1" height="1" fill="#ffffff" />
<rect x="253" y="887" width="1" height="1" fill="#ffffff" />
<rect x="308" y="887" width="1" height="1" fill="#ffffff" />
<rect x="340" y="887" width="1" height="1" fill="#ffffff" />
<rect x="363" y="887" width="1" height="1" fill="#ffffff" />
<rect x="381" y="887" width="1" height="1" fill="#ffffff" />
<rect x="396" y="887" width="1" height="1" fill="#ffffff" />
<rect x="408" y="887" width="1" height="1" fill="#ffffff" />
<rect x="419" y="887" width="1" height="1" fill="#ffffff" />
<rect x="428" y="887" width="1" height="1" fill="#ffffff" />
<rect x="436" y="887" width="1" height="3" fill="#ffffff" />
<rect x="492" y="887" width="1" height="1" fill="#ffffff" />
<rect x="524" y="887" width="1" height="1" fill="#ffffff" />
<rect x="547" y="887" width="1" height="1" fill="#ffffff" />
<rect x="565" y="887" width="1" height="1" fill="#ffffff" />
<rect x="579" y="887" width="1" height="1" fill="#ffffff" />
<rect x="592" y="887" width="1" height="1" fill="#ffffff" />
<rect x="602" y="887" width="1" height="1" fill="#ffffff" />
<rect x="612" y="887" width="1" height="1" fill="#ffffff" />
<rect x="620" y="887" width="1" height="1" fill="#ffffff" />
<rect x="675" y="887" width="1" height="1" fill="#ffffff" />
<rect x="708" y="887" width="1" height="1" fill="#ffffff" />
<rect x="731" y="887" width="1" height="1" fill="#ffffff" />
<rect x="749" y="887" width="1" height="1" fill="#ffffff" />
<rect x="763" y="887" width="1" height="1" fill="#ffffff" />
<rect x="775" y="887" width="1" height="1" fill="#ffffff" />
<rect x="786" y="887" width="1" height="1" fill="#ffffff" />
<rect x="795" y="887" width="1" height="1" fill="#ffffff" />
<rect x="804" y="887" width="1" height="3" fill="#ffffff" />
<rect x="859" y="887" width="1" height="1" fill="#ffffff" />
<rect x="891" y="887" width="1" height="1" fill="#ffffff" />
<rect x="914" y="887" width="1" height="1" fill="#ffffff" />
<rect x="932" y="887" width="1" height="1" fill="#ffffff" />
<rect x="947" y="887" width="1" height="1" fill="#ffffff" />
<rect x="959" y="887" width="1" height="1" fill="#ffffff" />
<rect x="970" y="887" width="1" height="1" fill="#ffffff" />
<rect x="979" y="887" width="1" height="1" fill="#ffffff" />
<rect x="988" y="887" width="1" height="1" fill="#ffffff" />
<rect x="1043" y="887" width="1" height="1" fill="#ffffff" />
<rect x="1075" y="887" width="1" height="1" fill="#ffffff" />
<rect x="1098" y="887" width="1" height="1" fill="#ffffff" />
<rect x="1116" y="887" width="1" height="1" fill="#ffffff" />
<rect x="1130" y="887" width="1" height="1" fill="#ffffff" />
<rect x="1143" y="887" width="1" height="1" fill="#ffffff" />
<rect x="1153" y="887" width="1" height="1" fill="#ffffff" />
<rect x="1163" y="887" width="1" height="1" fill="#ffffff" />
<rect x="1171" y="887" width="1" height="3" fill="#ffffff" />
<rect x="1226" y="887" width="1" height="1" fill="#ffffff" />
<rect x="1259" y="887" width="1" height="1" fill="#ffffff" />
<rect x="1282" y="887" width="1" height="1" fill="#ffffff" />
<rect x="1300" y="887" width="1" height="1" fill="#ffffff" />
<rect x="1314" y="887" width="1" height="1" fill="#ffffff" />
<rect x="1326" y="887" width="1" height="1" fill="#ffffff" />
<rect x="1337" y="887" width="1" height="1" fill="#ffffff" />
<rect x="1346" y="887" width="1" height="1" fill="#ffffff" />
<rect x="1355" y="887" width="1" height="1" fill="#ffffff" />
<rect x="1410" y="887" width="1" height="1" fill="#ffffff" />
<rect x="1443" y="887" width="1" height="1" fill="#ffffff" />
<rect x="1465" y="887" width="1" height="1" fill="#ffffff" />
<rect x="1483" y="887" width="1" height="1" fill="#ffffff" />
<rect x="1498" y="887" width="1" height="1" fill="#ffffff" />
<rect x="1510" y="887" width="1" height="1" fill="#ffffff" />
<rect x="1521" y="887" width="1" height="1" fill="#ffffff" />
<rect x="1530" y="887" width="1" height="1" fill="#ffffff" />
<rect x="1539" y="887" width="1" height="3" fill="#ffffff" />
<rect x="1594" y="887" width="1" height="1" fill="#ffffff" />
<rect x="1626" y="887" width="1" height="1" fill="#ffffff" />
<rect x="1649" y="887" width="1" height="1" fill="#ffffff" />
<rect x="1667" y="887" width="1" height="1" fill="#ffffff" />
<rect x="1682" y="887" width="1" height="1" fill="#ffffff" />
<rect x="1694" y="887" width="1" height="1" fill="#ffffff" />
<rect x="1704" y="887" width="1" height="1" fill="#ffffff" />
<rect x="1714" y="887" width="1" height="1" fill="#ffffff" />
<rect x="1722" y="887" width="1" height="1" fill="#ffffff" />
<rect x="1778" y="887" width="1" height="1" fill="#ffffff" />
<rect x="1810" y="887" width="1" height="1" fill="#ffffff" />
<rect x="1833" y="887" width="1" height="1" fill="#ffffff" />
<rect x="1851" y="887" width="1" height="1" fill="#ffffff" />
<rect x="1865" y="887" width="1" height="1" fill="#ffffff" />
<rect x="1878" y="887" width="1" height="1" fill="#ffffff" />
<rect x="1888" y="887" width="1" height="1" fill="#ffffff" />
<rect x="1898" y="887" width="1" height="1" fill="#ffffff" />
<rect x="1906" y="887" width="1" height="3" fill="#ffffff" />
<rect x="68" y="581" width="3" height="1" fill="#ffffff" />
<rect x="68" y="642" width="3" height="1" fill="#ffffff" />
<rect x="68" y="703" width="3" height="1" fill="#ffffff" />
<rect x="68" y="764" width="3" height="1" fill="#ffffff" />
<rect x="68" y="825" width="3" height="1" fill="#ffffff" />
<rect x="68" y="886" width="3" height="1" fill="#ffffff" />
<text x="44.73" y="597" font-family="Liberation Sans" font-size="16" fill="#ffffff" textLength="18.52" lengthAdjust="spacingAndGlyphs" >50</text>
<text x="53.20" y="648" font-family="Liberation Sans" font-size="16" fill="#ffffff" textLength="10.01" lengthAdjust="spacingAndGlyphs" >0</text>
<text x="38.23" y="709" font-family="Liberation Sans" font-size="16" fill="#ffffff" textLength="24.94" lengthAdjust="spacingAndGlyphs" >-50</text>
<text x="29.54" y="770" font-family="Liberation Sans" font-size="16" fill="#ffffff" textLength="34.02" lengthAdjust="spacingAndGlyphs" >-100</text>
<text x="29.54" y="831" font-family="Liberation Sans" font-size="16" fill="#ffffff" textLength="34.02" lengthAdjust="spacingAndGlyphs" >-150</text>
<text x="29.54" y="882" font-family="Liberation Sans" font-size="16" fill="#ffffff" textLength="34.02" lengthAdjust="spacingAndGlyphs" >-200</text>
<text x="69.21" y="910" font-family="Liberation Sans" font-size="16" fill="#ffffff" textLength="7.22" lengthAdjust="spacingAndGlyphs" >1</text>
<text x="422.63" y="910" font-family="Liberation Sans" font-size="16" fill="#ffffff" textLength="27.82" lengthAdjust="spacingAndGlyphs" >100</text>
<text x="790.76" y="910" font-family="Liberation Sans" font-size="16" fill="#ffffff" textLength="26.21" lengthAdjust="spacingAndGlyphs" >10k</text>
<text x="1159.48" y="910" font-family="Liberation Sans" font-size="16" fill="#ffffff" textLength="24.04" lengthAdjust="spacingAndGlyphs" >1M</text>
<text x="1517.63" y="910" font-family="Liberation Sans" font-size="16" fill="#ffffff" textLength="41.85" lengthAdjust="spacingAndGlyphs" >100M</text>
<text x="1874.58" y="910" font-family="Liberation Sans" font-size="16" fill="#ffffff" textLength="32.71" lengthAdjust="spacingAndGlyphs" >10G</text>
<text x="924.27" y="938" font-family="Liberation Sans" font-size="20" fill="#ffffff" textLength="127.06" lengthAdjust="spacingAndGlyphs" >Frequenz (Hz)</text>
<text x="-794.34" y="21.8" font-family="Liberation Sans" font-size="21" fill="#ffffff" textLength="120.08" lengthAdjust="spacingAndGlyphs" transform="rotate(-90)">Phase (Grad)</text>
<rect x="71" y="642" width="1835" height="1" fill="#ff0000" />
<rect x="1905" y="641" width="1" height="1" fill="#ff0000" />
<polyline points="71.00,642.50 73.50,642.50 75.50,642.50 77.50,642.50 79.50,642.50 81.50,642.50 83.50,642.50 85.50,642.50 87.50,642.50 89.50,642.50 91.50,642.50 93.50,642.50 95.50,642.50 97.50,642.50 99.50,642.50 101.50,642.50 103.50,642.50 105.50,642.50 107.50,642.50 109.50,642.50 111.50,642.50 113.50,642.50 115.50,642.50 117.50,642.50 119.50,642.50 121.50,642.50 123.50,642.50 125.50,642.50 127.50,642.50 129.50,642.50 131.50,642.50 133.50,642.50 135.50,642.50 137.50,642.50 139.50,642.50 141.50,642.50 143.50,642.50 145.50,642.50 147.50,642.50 149.50,642.50 151.50,642.50 153.50,642.50 155.50,642.50 157.50,642.50 159.50,642.50 161.50,642.50 163.50,642.50 165.50,642.50 167.50,642.50 169.50,642.50 171.50,642.50 173.50,642.50 175.50,642.50 177.50,642.50 179.50,642.50 181.50,642.50 183.50,642.50 185.50,642.50 187.50,642.50 189.50,642.50 191.50,642.50 193.50,642.50 195.50,642.50 197.50,642.50 199.50,642.50 201.50,642.50 203.50,642.50 205.50,642.50 207.50,642.50 209.50,642.50 211.50,642.50 213.50,642.50 215.50,642.50 217.50,642.50 219.50,642.50 221.50,642.50 223.50,642.50 225.50,642.50 227.50,642.50 229.50,642.50 231.50,642.50 233.50,642.50 235.50,642.50 237.50,642.50 239.50,642.50 241.50,642.50 243.50,642.50 245.50,642.50 247.50,642.50 249.50,642.50 251.50,642.50 253.50,642.50 255.50,642.50 257.50,642.50 259.50,642.50 261.50,642.50 263.50,642.51 265.50,642.51 267.50,642.51 269.50,642.51 271.50,642.51 273.50,642.51 275.50,642.51 277.50,642.51 279.50,642.51 281.50,642.51 283.50,642.51 285.50,642.51 287.50,642.51 289.50,642.51 291.50,642.51 293.50,642.51 295.50,642.51 297.50,642.51 299.50,642.51 301.50,642.51 303.50,642.51 305.50,642.51 307.50,642.51 309.50,642.51 311.50,642.51 313.50,642.51 315.50,642.51 317.50,642.51 319.50,642.51 321.50,642.51 323.50,642.51 325.50,642.51 327.50,642.51 329.50,642.51 331.50,642.51 333.50,642.51 335.50,642.51 337.50,642.51 339.50,642.51 341.50,642.51 343.50,642.51 345.50,642.51 347.50,642.51 349.50,642.51 351.50,642.52 353.50,642.52 355.50,642.52 357.50,642.52 359.50,642.52 361.50,642.52 363.50,642.52 365.50,642.52 367.50,642.52 369.50,642.52 371.50,642.52 373.50,642.52 375.50,642.52 377.50,642.52 379.50,642.52 381.50,642.52 383.50,642.52 385.50,642.52 387.50,642.52 389.50,642.52 391.50,642.53 393.50,642.53 395.50,642.53 397.50,642.53 399.50,642.53 401.50,642.53 403.50,642.53 405.50,642.53 407.50,642.53 409.50,642.53 411.50,642.53 413.50,642.53 415.50,642.53 417.50,642.53 419.50,642.54 421.50,642.54 423.50,642.54 425.50,642.54 427.50,642.54 429.50,642.54 431.50,642.54 433.50,642.54 435.50,642.54 437.50,642.54 439.50,642.55 441.50,642.55 443.50,642.55 445.50,642.55 447.50,642.55 449.50,642.55 451.50,642.55 453.50,642.55 455.50,642.56 457.50,642.56 459.50,642.56 461.50,642.56 463.50,642.56 465.50,642.56 467.50,642.56 469.50,642.57 471.50,642.57 473.50,642.57 475.50,642.57 477.50,642.57 479.50,642.58 481.50,642.58 483.50,642.58 485.50,642.58 487.50,642.58 489.50,642.59 491.50,642.59 493.50,642.59 495.50,642.59 497.50,642.59 499.50,642.60 501.50,642.60 503.50,642.60 505.50,642.60 507.50,642.61 509.50,642.61 511.50,642.61 513.50,642.62 515.50,642.62 517.50,642.62 519.50,642.62 521.50,642.63 523.50,642.63 525.50,642.63 527.50,642.64 529.50,642.64 531.50,642.64 533.50,642.65 535.50,642.65 537.50,642.66 539.50,642.66 541.50,642.66 543.50,642.67 545.50,642.67 547.50,642.68 549.50,642.68 551.50,642.69 553.50,642.69 555.50,642.70 557.50,642.70 559.50,642.71 561.50,642.71 563.50,642.72 565.50,642.72 567.50,642.73 569.50,642.73 571.50,642.74 573.50,642.74 575.50,642.75 577.50,642.76 579.50,642.76 581.50,642.77 583.50,642.78 585.50,642.78 587.50,642.79 589.50,642.80 591.50,642.81 593.50,642.81 595.50,642.82 597.50,642.83 599.50,642.84 601.50,642.85 603.50,642.86 605.50,642.86 607.50,642.87 609.50,642.88 611.50,642.89 613.50,642.90 615.50,642.91 617.50,642.92 619.50,642.93 621.50,642.95 623.50,642.96 625.50,642.97 627.50,642.98 629.50,642.99 631.50,643.01 633.50,643.02 635.50,643.03 637.50,643.04 639.50,643.06 641.50,643.07 643.50,643.09 645.50,643.10 647.50,643.12 649.50,643.13 651.50,643.15 653.50,643.17 655.50,643.18 657.50,643.20 659.50,643.22 661.50,643.24 663.50,643.25 665.50,643.27 667.50,643.29 669.50,643.31 671.50,643.33 673.50,643.36 675.50,643.38 677.50,643.40 679.50,643.42 681.50,643.45 683.50,643.47 685.50,643.49 687.50,643.52 689.50,643.54 691.50,643.57 693.50,643.60 695.50,643.63 697.50,643.66 699.50,643.68 701.50,643.71 703.50,643.75 705.50,643.78 707.50,643.81 709.50,643.84 711.50,643.88 713.50,643.91 715.50,643.95 717.50,643.98 719.50,644.02 721.50,644.06 723.50,644.10 725.50,644.14 727.50,644.18 729.50,644.22 731.50,644.27 733.50,644.31 735.50,644.36 737.50,644.41 739.50,644.45 741.50,644.50 743.50,644.56 745.50,644.61 747.50,644.66 749.50,644.72 751.50,644.77 753.50,644.83 755.50,644.89 757.50,644.95 759.50,645.01 761.50,645.07 763.50,645.14 765.50,645.21 767.50,645.28 769.50,645.35 771.50,645.42 773.50,645.49 775.50,645.57 777.50,645.65 779.50,645.73 781.50,645.81 783.50,645.89 785.50,645.98 787.50,646.07 789.50,646.16 791.50,646.25 793.50,646.34 795.50,646.44 797.50,646.54 799.50,646.64 801.50,646.75 803.50,646.86 805.50,646.97 807.50,647.08 809.50,647.19 811.50,647.31 813.50,647.43 815.50,647.56 817.50,647.69 819.50,647.82 821.50,647.95 823.50,648.09 825.50,648.23 827.50,648.38 829.50,648.53 831.50,648.68 833.50,648.83 835.50,648.99 837.50,649.16 839.50,649.33 841.50,649.50 843.50,649.67 845.50,649.86 847.50,650.04 849.50,650.23 851.50,650.43 853.50,650.63 855.50,650.83 857.50,651.04 859.50,651.25 861.50,651.47 863.50,651.70 865.50,651.93 867.50,652.17 869.50,652.41 871.50,652.66 873.50,652.91 875.50,653.17 877.50,653.44 879.50,653.71 881.50,653.99 883.50,654.28 885.50,654.57 887.50,654.87 889.50,655.18 891.50,655.50 893.50,655.82 895.50,656.15 897.50,656.49 899.50,656.83 901.50,657.19 903.50,657.55 905.50,657.92 907.50,658.30 909.50,658.69 911.50,659.08 913.50,659.49 915.50,659.91 917.50,660.33 919.50,660.76 921.50,661.21 923.50,661.66 925.50,662.12 927.50,662.60 929.50,663.08 931.50,663.58 933.50,664.08 935.50,664.60 937.50,665.12 939.50,665.66 941.50,666.20 943.50,666.76 945.50,667.33 947.50,667.91 949.50,668.51 951.50,669.11 953.50,669.72 955.50,670.35 957.50,670.99 959.50,671.64 961.50,672.30 963.50,672.97 965.50,673.65 967.50,674.35 969.50,675.05 971.50,675.77 973.50,676.50 975.50,677.24 977.50,677.99 979.50,678.75 981.50,679.52 983.50,680.30 985.50,681.09 987.50,681.89 989.50,682.71 991.50,683.53 993.50,684.36 995.50,685.19 997.50,686.04 999.50,686.89 1001.50,687.76 1003.50,688.63 1005.50,689.50 1007.50,690.38 1009.50,691.27 1011.50,692.17 1013.50,693.07 1015.50,693.97 1017.50,694.88 1019.50,695.79 1021.50,696.70 1023.50,697.62 1025.50,698.54 1027.50,699.46 1029.50,700.38 1031.50,701.30 1033.50,702.22 1035.50,703.14 1037.50,704.06 1039.50,704.98 1041.50,705.90 1043.50,706.81 1045.50,707.72 1047.50,708.63 1049.50,709.53 1051.50,710.43 1053.50,711.32 1055.50,712.21 1057.50,713.09 1059.50,713.97 1061.50,714.84 1063.50,715.71 1065.50,716.56 1067.50,717.41 1069.50,718.26 1071.50,719.09 1073.50,719.92 1075.50,720.74 1077.50,721.55 1079.50,722.36 1081.50,723.15 1083.50,723.94 1085.50,724.72 1087.50,725.49 1089.50,726.25 1091.50,727.01 1093.50,727.75 1095.50,728.49 1097.50,729.22 1099.50,729.94 1101.50,730.65 1103.50,731.36 1105.50,732.05 1107.50,732.74 1109.50,733.42 1111.50,734.09 1113.50,734.76 1115.50,735.41 1117.50,736.06 1119.50,736.71 1121.50,737.34 1123.50,737.97 1125.50,738.60 1127.50,739.21 1129.50,739.83 1131.50,740.43 1133.50,741.03 1135.50,741.63 1137.50,742.21 1139.50,742.80 1141.50,743.38 1143.50,743.96 1145.50,744.53 1147.50,745.09 1149.50,745.66 1151.50,746.22 1153.50,746.78 1155.50,747.33 1157.50,747.89 1159.50,748.44 1161.50,748.99 1163.50,749.53 1165.50,750.08 1167.50,750.62 1169.50,751.17 1171.50,751.71 1173.50,752.25 1175.50,752.79 1177.50,753.34 1179.50,753.88 1181.50,754.42 1183.50,754.97 1185.50,755.52 1187.50,756.06 1189.50,756.61 1191.50,757.17 1193.50,757.72 1195.50,758.28 1197.50,758.84 1199.50,759.40 1201.50,759.97 1203.50,760.54 1205.50,761.12 1207.50,761.70 1209.50,762.28 1211.50,762.87 1213.50,763.46 1215.50,764.06 1217.50,764.66 1219.50,765.27 1221.50,765.89 1223.50,766.51 1225.50,767.14 1227.50,767.77 1229.50,768.42 1231.50,769.07 1233.50,769.72 1235.50,770.38 1237.50,771.05 1239.50,771.73 1241.50,772.42 1243.50,773.11 1245.50,773.82 1247.50,774.53 1249.50,775.24 1251.50,775.97 1253.50,776.71 1255.50,777.45 1257.50,778.20 1259.50,778.96 1261.50,779.73 1263.50,780.51 1265.50,781.29 1267.50,782.09 1269.50,782.89 1271.50,783.70 1273.50,784.52 1275.50,785.35 1277.50,786.18 1279.50,787.02 1281.50,787.87 1283.50,788.73 1285.50,789.59 1287.50,790.46 1289.50,791.34 1291.50,792.22 1293.50,793.11 1295.50,794.00 1297.50,794.90 1299.50,795.80 1301.50,796.71 1303.50,797.62 1305.50,798.53 1307.50,799.44 1309.50,800.36 1311.50,801.28 1313.50,802.20 1315.50,803.13 1317.50,804.05 1319.50,804.97 1321.50,805.89 1323.50,806.81 1325.50,807.73 1327.50,808.64 1329.50,809.55 1331.50,810.46 1333.50,811.37 1335.50,812.27 1337.50,813.17 1339.50,814.06 1341.50,814.94 1343.50,815.82 1345.50,816.69 1347.50,817.56 1349.50,818.41 1351.50,819.26 1353.50,820.10 1355.50,820.93 1357.50,821.76 1359.50,822.57 1361.50,823.38 1363.50,824.17 1365.50,824.96 1367.50,825.73 1369.50,826.49 1371.50,827.25 1373.50,827.99 1375.50,828.72 1377.50,829.44 1379.50,830.15 1381.50,830.85 1383.50,831.54 1385.50,832.21 1387.50,832.88 1389.50,833.53 1391.50,834.17 1393.50,834.80 1395.50,835.42 1397.50,836.03 1399.50,836.62 1401.50,837.21 1403.50,837.78 1405.50,838.34 1407.50,838.89 1409.50,839.43 1411.50,839.96 1413.50,840.48 1415.50,840.99 1417.50,841.49 1419.50,841.97 1421.50,842.45 1423.50,842.92 1425.50,843.37 1427.50,843.82 1429.50,844.26 1431.50,844.69 1433.50,845.11 1435.50,845.51 1437.50,845.92 1439.50,846.31 1441.50,846.69 1443.50,847.06 1445.50,847.43 1447.50,847.79 1449.50,848.14 1451.50,848.48 1453.50,848.81 1455.50,849.14 1457.50,849.45 1459.50,849.77 1461.50,850.07 1463.50,850.37 1465.50,850.66 1467.50,850.94 1469.50,851.21 1471.50,851.48 1473.50,851.75 1475.50,852.01 1477.50,852.26 1479.50,852.50 1481.50,852.74 1483.50,852.98 1485.50,853.20 1487.50,853.43 1489.50,853.64 1491.50,853.86 1493.50,854.06 1495.50,854.27 1497.50,854.46 1499.50,854.66 1501.50,854.85 1503.50,855.03 1505.50,855.21 1507.50,855.38 1509.50,855.55 1511.50,855.72 1513.50,855.88 1515.50,856.04 1517.50,856.20 1519.50,856.35 1521.50,856.50 1523.50,856.64 1525.50,856.78 1527.50,856.92 1529.50,857.05 1531.50,857.18 1533.50,857.31 1535.50,857.44 1537.50,857.56 1539.50,857.68 1541.50,857.79 1543.50,857.91 1545.50,858.02 1547.50,858.13 1549.50,858.23 1551.50,858.33 1553.50,858.43 1555.50,858.53 1557.50,858.63 1559.50,858.72 1561.50,858.81 1563.50,858.90 1565.50,858.99 1567.50,859.07 1569.50,859.16 1571.50,859.24 1573.50,859.32 1575.50,859.39 1577.50,859.47 1579.50,859.54 1581.50,859.62 1583.50,859.69 1585.50,859.75 1587.50,859.82 1589.50,859.89 1591.50,859.95 1593.50,860.01 1595.50,860.07 1597.50,860.13 1599.50,860.19 1601.50,860.25 1603.50,860.31 1605.50,860.36 1607.50,860.41 1609.50,860.47 1611.50,860.52 1613.50,860.57 1615.50,860.62 1617.50,860.66 1619.50,860.71 1621.50,860.76 1623.50,860.80 1625.50,860.84 1627.50,860.89 1629.50,860.93 1631.50,860.97 1633.50,861.01 1635.50,861.05 1637.50,861.09 1639.50,861.13 1641.50,861.16 1643.50,861.20 1645.50,861.23 1647.50,861.27 1649.50,861.30 1651.50,861.34 1653.50,861.37 1655.50,861.40 1657.50,861.43 1659.50,861.46 1661.50,861.49 1663.50,861.52 1665.50,861.55 1667.50,861.58 1669.50,861.61 1671.50,861.64 1673.50,861.66 1675.50,861.69 1677.50,861.72 1679.50,861.74 1681.50,861.77 1683.50,861.79 1685.50,861.82 1687.50,861.84 1689.50,861.86 1691.50,861.89 1693.50,861.91 1695.50,861.93 1697.50,861.96 1699.50,861.98 1701.50,862.00 1703.50,862.02 1705.50,862.04 1707.50,862.06 1709.50,862.08 1711.50,862.10 1713.50,862.12 1715.50,862.14 1717.50,862.16 1719.50,862.18 1721.50,862.20 1723.50,862.22 1725.50,862.24 1727.50,862.26 1729.50,862.28 1731.50,862.29 1733.50,862.31 1735.50,862.33 1737.50,862.35 1739.50,862.36 1741.50,862.38 1743.50,862.40 1745.50,862.42 1747.50,862.43 1749.50,862.45 1751.50,862.47 1753.50,862.48 1755.50,862.50 1757.50,862.52 1759.50,862.53 1761.50,862.55 1763.50,862.57 1765.50,862.58 1767.50,862.60 1769.50,862.61 1771.50,862.63 1773.50,862.65 1775.50,862.66 1777.50,862.68 1779.50,862.69 1781.50,862.71 1783.50,862.73 1785.50,862.74 1787.50,862.76 1789.50,862.77 1791.50,862.79 1793.50,862.81 1795.50,862.82 1797.50,862.84 1799.50,862.85 1801.50,862.87 1803.50,862.89 1805.50,862.90 1807.50,862.92 1809.50,862.94 1811.50,862.95 1813.50,862.97 1815.50,862.99 1817.50,863.00 1819.50,863.02 1821.50,863.04 1823.50,863.05 1825.50,863.07 1827.50,863.09 1829.50,863.10 1831.50,863.12 1833.50,863.14 1835.50,863.16 1837.50,863.17 1839.50,863.19 1841.50,863.21 1843.50,863.23 1845.50,863.24 1847.50,863.26 1849.50,863.28 1851.50,863.30 1853.50,863.32 1855.50,863.34 1857.50,863.36 1859.50,863.37 1861.50,863.39 1863.50,863.41 1865.50,863.43 1867.50,863.45 1869.50,863.47 1871.50,863.49 1873.50,863.51 1875.50,863.53 1877.50,863.55 1879.50,863.57 1881.50,863.59 1883.50,863.62 1885.50,863.64 1887.50,863.66 1889.50,863.68 1891.50,863.70 1893.50,863.73 1895.50,863.75 1897.50,863.77 1899.50,863.79 1901.50,863.82 1903.50,863.84 1905.50,863.86 1906.00,863.87" fill="none" stroke="#00b400" stroke-width="1" shape-rendering="crispEdges"/>
<path d="M77.5 639 L80.5 644.5 L74.5 644.5 Z" fill="none" stroke="#ffffff" stroke-width="1" shape-rendering="crispEdges"/>
<path d="M137.5 639 L140.5 644.5 L134.5 644.5 Z" fill="none" stroke="#ffffff" stroke-width="1" shape-rendering="crispEdges"/>
<path d="M197.5 639 L200.5 644.5 L194.5 644.5 Z" fill="none" stroke="#ffffff" stroke-width="1" shape-rendering="crispEdges"/>
<path d="M257.5 639 L260.5 644.5 L254.5 644.5 Z" fill="none" stroke="#ffffff" stroke-width="1" shape-rendering="crispEdges"/>
<path d="M317.5 639 L320.5 644.5 L314.5 644.5 Z" fill="none" stroke="#ffffff" stroke-width="1" shape-rendering="crispEdges"/>
<path d="M377.5 639 L380.5 644.5 L374.5 644.5 Z" fill="none" stroke="#ffffff" stroke-width="1" shape-rendering="crispEdges"/>
<path d="M437.5 639 L440.5 644.5 L434.5 644.5 Z" fill="none" stroke="#ffffff" stroke-width="1" shape-rendering="crispEdges"/>
<path d="M497.5 639 L500.5 644.5 L494.5 644.5 Z" fill="none" stroke="#ffffff" stroke-width="1" shape-rendering="crispEdges"/>
<path d="M557.5 639 L560.5 644.5 L554.5 644.5 Z" fill="none" stroke="#ffffff" stroke-width="1" shape-rendering="crispEdges"/>
<path d="M617.5 639 L620.5 644.5 L614.5 644.5 Z" fill="none" stroke="#ffffff" stroke-width="1" shape-rendering="crispEdges"/>
<path d="M677.5 639 L680.5 644.5 L674.5 644.5 Z" fill="none" stroke="#ffffff" stroke-width="1" shape-rendering="crispEdges"/>
<path d="M737.5 639 L740.5 644.5 L734.5 644.5 Z" fill="none" stroke="#ffffff" stroke-width="1" shape-rendering="crispEdges"/>
<path d="M797.5 639 L800.5 644.5 L794.5 644.5 Z" fill="none" stroke="#ffffff" stroke-width="1" shape-rendering="crispEdges"/>
<path d="M857.5 639 L860.5 644.5 L854.5 644.5 Z" fill="none" stroke="#ffffff" stroke-width="1" shape-rendering="crispEdges"/>
<path d="M917.5 639 L920.5 644.5 L914.5 644.5 Z" fill="none" stroke="#ffffff" stroke-width="1" shape-rendering="crispEdges"/>
<path d="M977.5 639 L980.5 644.5 L974.5 644.5 Z" fill="none" stroke="#ffffff" stroke-width="1" shape-rendering="crispEdges"/>
<path d="M1037.5 639 L1040.5 644.5 L1034.5 644.5 Z" fill="none" stroke="#ffffff" stroke-width="1" shape-rendering="crispEdges"/>
<path d="M1097.5 639 L1100.5 644.5 L1094.5 644.5 Z" fill="none" stroke="#ffffff" stroke-width="1" shape-rendering="crispEdges"/>
<path d="M1157.5 639 L1160.5 644.5 L1154.5 644.5 Z" fill="none" stroke="#ffffff" stroke-width="1" shape-rendering="crispEdges"/>
<path d="M1217.5 639 L1220.5 644.5 L1214.5 644.5 Z" fill="none" stroke="#ffffff" stroke-width="1" shape-rendering="crispEdges"/>
<path d="M1277.5 639 L1280.5 644.5 L1274.5 644.5 Z" fill="none" stroke="#ffffff" stroke-width="1" shape-rendering="crispEdges"/>
<path d="M1337.5 639 L1340.5 644.5 L1334.5 644.5 Z" fill="none" stroke="#ffffff" stroke-width="1" shape-rendering="crispEdges"/>
<path d="M1397.5 639 L1400.5 644.5 L1394.5 644.5 Z" fill="none" stroke="#ffffff" stroke-width="1" shape-rendering="crispEdges"/>
<path d="M1457.5 639 L1460.5 644.5 L1454.5 644.5 Z" fill="none" stroke="#ffffff" stroke-width="1" shape-rendering="crispEdges"/>
<path d="M1517.5 639 L1520.5 644.5 L1514.5 644.5 Z" fill="none" stroke="#ffffff" stroke-width="1" shape-rendering="crispEdges"/>
<path d="M1577.5 639 L1580.5 644.5 L1574.5 644.5 Z" fill="none" stroke="#ffffff" stroke-width="1" shape-rendering="crispEdges"/>
<path d="M1637.5 639 L1640.5 644.5 L1634.5 644.5 Z" fill="none" stroke="#ffffff" stroke-width="1" shape-rendering="crispEdges"/>
<path d="M1697.5 639 L1700.5 644.5 L1694.5 644.5 Z" fill="none" stroke="#ffffff" stroke-width="1" shape-rendering="crispEdges"/>
<path d="M1757.5 639 L1760.5 644.5 L1754.5 644.5 Z" fill="none" stroke="#ffffff" stroke-width="1" shape-rendering="crispEdges"/>
<path d="M1817.5 639 L1820.5 644.5 L1814.5 644.5 Z" fill="none" stroke="#ffffff" stroke-width="1" shape-rendering="crispEdges"/>
<path d="M1877.5 639 L1880.5 644.5 L1874.5 644.5 Z" fill="none" stroke="#ffffff" stroke-width="1" shape-rendering="crispEdges"/>
<rect x="55" y="72" width="1" height="24" fill="#a0a0a0" />
<rect x="56" y="72" width="1" height="24" fill="#ffffff" />
<rect x="177" y="72" width="1" height="24" fill="#a0a0a0" />
<rect x="178" y="72" width="1" height="24" fill="#ffffff" />
<rect x="299" y="72" width="1" height="24" fill="#a0a0a0" />
<rect x="300" y="72" width="1" height="24" fill="#ffffff" />
<rect x="392" y="72" width="1" height="24" fill="#a0a0a0" />
<rect x="393" y="72" width="1" height="24" fill="#ffffff" />
<rect x="601" y="72" width="1" height="24" fill="#a0a0a0" />
<rect x="602" y="72" width="1" height="24" fill="#ffffff" />
<rect x="665" y="72" width="1" height="24" fill="#a0a0a0" />
<rect x="666" y="72" width="1" height="24" fill="#ffffff" />
<rect x="729" y="72" width="1" height="24" fill="#a0a0a0" />
<rect x="730" y="72" width="1" height="24" fill="#ffffff" />
<rect x="793" y="72" width="1" height="24" fill="#a0a0a0" />
<rect x="794" y="72" width="1" height="24" fill="#ffffff" />
<rect x="210.5" y="70.5" width="28" height="26" rx="3" fill="#cce4f7" stroke="#99cdf7" stroke-width="1"/>
<rect x="239.5" y="70.5" width="28" height="26" rx="3" fill="#cce4f7" stroke="#99cdf7" stroke-width="1"/>
<rect x="268.5" y="70.5" width="28" height="26" rx="3" fill="#cce4f7" stroke="#99cdf7" stroke-width="1"/>
<rect x="303.5" y="70.5" width="28" height="26" rx="3" fill="#cce4f7" stroke="#99cdf7" stroke-width="1"/>
<rect x="483.5" y="70.5" width="28" height="26" rx="3" fill="#cce4f7" stroke="#99cdf7" stroke-width="1"/>
<rect x="361.5" y="70.5" width="28" height="26" rx="3" fill="#e5f1fb" stroke="#cfe6fa" stroke-width="1"/>
<path d="M0 78.5 H4.5 L5.5 79.5 H12.5 V84" fill="none" stroke="#000000" stroke-width="1.3" />
<rect x="0" y="80" width="12" height="4" fill="#ffffff" />
<rect x="0" y="80" width="1" height="1" fill="#ffff00" />
<rect x="1" y="82" width="1" height="1" fill="#ffff00" />
<rect x="2" y="81" width="1" height="1" fill="#ffff00" />
<rect x="3" y="81" width="1" height="1" fill="#ffff00" />
<rect x="4" y="80" width="1" height="1" fill="#ffff00" />
<rect x="5" y="82" width="1" height="1" fill="#ffff00" />
<rect x="6" y="81" width="1" height="1" fill="#ffff00" />
<rect x="7" y="81" width="1" height="1" fill="#ffff00" />
<rect x="8" y="80" width="1" height="1" fill="#ffff00" />
<rect x="9" y="82" width="1" height="1" fill="#ffff00" />
<rect x="10" y="81" width="1" height="1" fill="#ffff00" />
<rect x="11" y="81" width="1" height="1" fill="#ffff00" />
<path d="M0 84.5 L4.5 84.5 L16.5 84.5 L12 90.5 L0 90.5 Z" fill="#ffffff" stroke="none"/>
<rect x="2" y="86" width="2" height="1" fill="#ffff00" />
<rect x="3" y="88" width="2" height="1" fill="#ffff00" />
<rect x="4" y="87" width="2" height="1" fill="#ffff00" />
<rect x="5" y="89" width="2" height="1" fill="#ffff00" />
<rect x="6" y="86" width="2" height="1" fill="#ffff00" />
<rect x="7" y="88" width="2" height="1" fill="#ffff00" />
<rect x="8" y="87" width="2" height="1" fill="#ffff00" />
<rect x="9" y="89" width="2" height="1" fill="#ffff00" />
<rect x="10" y="86" width="2" height="1" fill="#ffff00" />
<rect x="11" y="88" width="2" height="1" fill="#ffff00" />
<path d="M4.5 84.5 H16.5 L12 90.5" fill="none" stroke="#000000" stroke-width="1.4" />
<path d="M0 88 L4 84.5" fill="none" stroke="#000080" stroke-width="1.5" />
<rect x="0" y="90" width="12" height="2" fill="#000000" />
<path d="M9.5 77.5 Q10 74 12.5 74 Q15 74 14.5 77.5" fill="none" stroke="#000000" stroke-width="1.2" />
<path d="M14.2 77.3 H16.5 L18.8 75 V80 H14.2 Z" fill="#000"/>
<rect x="32" y="75" width="15" height="2" fill="#a0a0a0" />
<rect x="30" y="77" width="2" height="14" fill="#a0a0a0" />
<rect x="32" y="77" width="15" height="14" fill="#ffffff" />
<rect x="35" y="77" width="9" height="7" fill="#ffff00" />
<rect x="37" y="77" width="1" height="1" fill="#ffffff" />
<rect x="38" y="77" width="1" height="1" fill="#ffffff" />
<rect x="42" y="77" width="1" height="1" fill="#ffffff" />
<rect x="43" y="77" width="1" height="1" fill="#ffffff" />
<rect x="38" y="78" width="1" height="1" fill="#ffffff" />
<rect x="39" y="78" width="1" height="1" fill="#ffffff" />
<rect x="43" y="78" width="1" height="1" fill="#ffffff" />
<rect x="35" y="79" width="1" height="1" fill="#ffffff" />
<rect x="39" y="79" width="1" height="1" fill="#ffffff" />
<rect x="40" y="79" width="1" height="1" fill="#ffffff" />
<rect x="35" y="80" width="1" height="1" fill="#ffffff" />
<rect x="36" y="80" width="1" height="1" fill="#ffffff" />
<rect x="40" y="80" width="1" height="1" fill="#ffffff" />
<rect x="41" y="80" width="1" height="1" fill="#ffffff" />
<rect x="36" y="81" width="1" height="1" fill="#ffffff" />
<rect x="37" y="81" width="1" height="1" fill="#ffffff" />
<rect x="41" y="81" width="1" height="1" fill="#ffffff" />
<rect x="42" y="81" width="1" height="1" fill="#ffffff" />
<rect x="37" y="82" width="1" height="1" fill="#ffffff" />
<rect x="38" y="82" width="1" height="1" fill="#ffffff" />
<rect x="42" y="82" width="1" height="1" fill="#ffffff" />
<rect x="43" y="82" width="1" height="1" fill="#ffffff" />
<rect x="38" y="83" width="1" height="1" fill="#ffffff" />
<rect x="39" y="83" width="1" height="1" fill="#ffffff" />
<rect x="43" y="83" width="1" height="1" fill="#ffffff" />
<rect x="44" y="77" width="1" height="8" fill="#a8a8c0" />
<rect x="35" y="84" width="10" height="1" fill="#a8a8c0" />
<rect x="45" y="78" width="2" height="1" fill="#ff0000" />
<rect x="47" y="77" width="1" height="15" fill="#000000" />
<rect x="30" y="90" width="7" height="1" fill="#a0a0a0" />
<rect x="43" y="90" width="4" height="1" fill="#a0a0a0" />
<rect x="37" y="87" width="5" height="2" fill="#a0a0a0" />
<rect x="38" y="88" width="1" height="1" fill="#000000" />
<rect x="42" y="87" width="1" height="4" fill="#000000" />
<rect x="37" y="90" width="6" height="1" fill="#000000" />
<rect x="33" y="91" width="15" height="2" fill="#000000" />
<path d="M64 77 L65 75 H67 L67.8 77 V80.5 L72 76.2 L73 75 H80.5 L83 77.5 V84.6 L77.5 92.5 H74.5 L74 89 L79 84.5 V79 H74.5 L72.8 82 L75 84.5 L73.7 85.2 V86.8 H64 Z" fill="#a0a0a0"/>
<path d="M95 76 L102.5 82 L107.5 88.5" fill="none" stroke="#000000" stroke-width="1.5" />
<path d="M108.5 77 L102.5 82 L96.5 90" fill="none" stroke="#000000" stroke-width="1.5" />
<circle cx="95" cy="76" r="1.4" fill="#000"/>
<path d="M122.5 74.5 H129.5 L130.5 75.5 V86.5 H122.5 Z" fill="#ffffff" stroke="#000000" stroke-width="1.4" />
<rect x="125" y="78" width="2" height="1" fill="#000000" />
<rect x="125" y="80" width="6" height="2" fill="#000000" />
<rect x="125" y="83" width="6" height="1" fill="#000000" />
<path d="M130.5 78.5 H136.5 L140.5 82 V89.5 H130.5 Z" fill="#ffffff" stroke="#000080" stroke-width="1.4" />
<rect x="137" y="79" width="2" height="3" fill="#000080" />
<rect x="133" y="82" width="3" height="1" fill="#000000" />
<rect x="133" y="84" width="6" height="1" fill="#000000" />
<rect x="133" y="87" width="6" height="1" fill="#000000" />
<rect x="151" y="75" width="18" height="15" rx="1.5" fill="#a0a0a0"/>
<rect x="157" y="74" width="5" height="1" fill="#a0a0a0" />
<rect x="156" y="78" width="8" height="1" fill="#ffffff" />
<rect x="160" y="83" width="8" height="7" fill="#ffffff" />
<rect x="161" y="85" width="4" height="1" fill="#a0a0a0" />
<rect x="161" y="88" width="6" height="1" fill="#a0a0a0" />
<rect x="159" y="90" width="11" height="2" fill="#a0a0a0" />
<rect x="167" y="84" width="3" height="8" fill="#a0a0a0" />
<rect x="187" y="75" width="17" height="15" fill="#f4ffff" />
<rect x="191" y="75" width="1" height="15" fill="#ff0000" />
<rect x="196" y="75" width="1" height="15" fill="#ff0000" />
<rect x="201" y="75" width="1" height="15" fill="#ff0000" />
<rect x="187" y="80" width="17" height="2" fill="#ff0000" />
<rect x="187" y="85" width="17" height="2" fill="#ff0000" />
<rect x="186" y="75" width="1" height="17" fill="#000000" />
<rect x="186" y="90" width="18" height="2" fill="#000000" />
<rect x="216" y="75" width="18" height="17" fill="#000000" />
<rect x="217" y="77" width="15" height="13" fill="#e4f6ff" />
<rect x="219" y="79" width="12" height="1" fill="#ff0000" />
<rect x="219" y="83" width="12" height="1" fill="#00e000" />
<rect x="219" y="87" width="12" height="1" fill="#ffff00" />
<rect x="245" y="75" width="1" height="17" fill="#000000" />
<rect x="245" y="90" width="19" height="2" fill="#000000" />
<rect x="250" y="77" width="1" height="13" fill="#000000" />
<rect x="259" y="77" width="1" height="13" fill="#000000" />
<rect x="249" y="75" width="1" height="2" fill="#000000" />
<rect x="251" y="75" width="1" height="2" fill="#000000" />
<rect x="252" y="75" width="2" height="2" fill="#000000" />
<rect x="258" y="75" width="1" height="2" fill="#000000" />
<rect x="260" y="75" width="1" height="2" fill="#000000" />
<path d="M246 83.5 L247.5 83.5 L249.5 80 L252 81 L253.5 84 L255 87.5 L257 87.5 L258.5 85 L260.5 80.5 L262.5 79.5" fill="none" stroke="#ff0000" stroke-width="1.3" />
<rect x="246" y="82" width="2" height="2" fill="#ff0000" />
<rect x="251" y="80" width="2" height="2" fill="#ff0000" />
<rect x="274" y="75" width="13" height="12" fill="#000000" />
<rect x="275" y="77" width="10" height="8" fill="#ffffff" />
<rect x="279" y="80" width="13" height="12" fill="#000000" />
<rect x="280" y="82" width="5" height="2" fill="#ffffff" />
<path d="M308 87.5 H311.5 L314 86 L317 84.5 L318.5 82 L319.3 76 L320.5 77.5 L322.5 80 L323.5 82.5 L325.5 85 L326.5 86.5 L328 88" fill="none" stroke="#ff0000" stroke-width="1.2" />
<rect x="313" y="85" width="2" height="2" fill="#ff0000" />
<rect x="320" y="77" width="2" height="2" fill="#ff0000" />
<rect x="325" y="85" width="2" height="2" fill="#ff0000" />
<rect x="319" y="75" width="1" height="2" fill="#ff0000" />
<circle cx="338.5" cy="87.3" r="2.6" fill="#ff0000"/>
<rect x="346" y="74.8" width="2" height="6" fill="#ff0000" />
<rect x="344.5" y="76.3" width="5" height="3" fill="#ff0000" />
<rect x="346" y="76.3" width="3.5" height="3" fill="#ff0000" />
<circle cx="353.5" cy="86.3" r="2.6" fill="#ff0000"/>
<path d="M367.5 87 L370 84.5 L371.5 82 L373.5 80.5 L375.5 78 M376.5 78 L378 81.5 L379.5 84 L382 86" fill="none" stroke="#ff0000" stroke-width="1.3" />
<circle cx="367.5" cy="87.3" r="2.6" fill="#ff0000"/>
<rect x="375" y="74.8" width="2" height="6" fill="#ff0000" />
<rect x="373.5" y="76.3" width="5" height="3" fill="#ff0000" />
<rect x="375" y="76.3" width="3.5" height="3" fill="#ff0000" />
<circle cx="382.5" cy="86.3" r="2.6" fill="#ff0000"/>
<circle cx="408.5" cy="81.3" r="6.6" fill="#ffffff" stroke="#000" stroke-width="1.3"/>
<rect x="405" y="80" width="7" height="3" fill="#800000" />
<rect x="407" y="78" width="3" height="7" fill="#800000" />
<path d="M412 87 L414.5 89 L418 92" fill="none" stroke="#000080" stroke-width="3" />
<path d="M412.5 87.5 L414 88.5 M414.5 90 L416 91" fill="none" stroke="#ffffff" stroke-width="0.8" />
<circle cx="437.5" cy="81.3" r="6.6" fill="#ffffff" stroke="#000" stroke-width="1.3"/>
<rect x="434" y="80" width="7" height="3" fill="#008000" />
<path d="M441 87 L443.5 89 L447 92" fill="none" stroke="#000080" stroke-width="3" />
<path d="M441.5 87.5 L443 88.5 M443.5 90 L445 91" fill="none" stroke="#ffffff" stroke-width="0.8" />
<circle cx="465.5" cy="81.5" r="6" fill="#ffffff" stroke="#a0a0a0" stroke-width="1.6"/>
<path d="M471.5 80 V85.5 L470 87.5 H465 M469.5 86 L476 92" fill="none" stroke="#000000" stroke-width="1.5" />
<path d="M473 74 H478.5 V79.5 Z" fill="#000"/>
<path d="M458 88.5 V93 H462.5 Z" fill="#000"/>
<rect x="492" y="78" width="15" height="13" fill="#ffffff" />
<rect x="505" y="78" width="2" height="14" fill="#000000" />
<rect x="492" y="89" width="15" height="2" fill="#000000" />
<rect x="492" y="86" width="1" height="4" fill="#000000" />
<rect x="497" y="78" width="9" height="1" fill="#000000" />
<path d="M494.5 74.5 H498.5 L502.5 78.5 V84.5 L498.5 88.5 H494.5 L490.5 84.5 V78.5 Z" transform="translate(0 0)" fill="#ffffff" stroke="#000" stroke-width="1.2" stroke-dasharray="2 1"/>
<path d="M501.5 86.5 L506.5 91" fill="none" stroke="#ffff00" stroke-width="1.5" />
<rect x="493.5" y="78.5" width="5" height="5" fill="none" stroke="#0000ff" stroke-width="1.6"/>
<rect x="521" y="78" width="15" height="13" fill="#ffffff" />
<rect x="534" y="78" width="2" height="14" fill="#000000" />
<rect x="521" y="89" width="15" height="2" fill="#000000" />
<rect x="521" y="86" width="1" height="4" fill="#000000" />
<rect x="526" y="78" width="9" height="1" fill="#000000" />
<path d="M494.5 74.5 H498.5 L502.5 78.5 V84.5 L498.5 88.5 H494.5 L490.5 84.5 V78.5 Z" transform="translate(29 0)" fill="#ffffff" stroke="#000" stroke-width="1.2" stroke-dasharray="2 1"/>
<path d="M530.5 86.5 L535.5 91" fill="none" stroke="#ffff00" stroke-width="1.5" />
<path d="M520 81 L523 78 V80 H525 V78 L528 81 L525 84 V82 H523 V84 Z" fill="#0000ff"/>
<rect x="550" y="78" width="15" height="13" fill="#ffffff" />
<rect x="563" y="78" width="2" height="14" fill="#000000" />
<rect x="550" y="89" width="15" height="2" fill="#000000" />
<rect x="550" y="86" width="1" height="4" fill="#000000" />
<rect x="555" y="78" width="9" height="1" fill="#000000" />
<path d="M494.5 74.5 H498.5 L502.5 78.5 V84.5 L498.5 88.5 H494.5 L490.5 84.5 V78.5 Z" transform="translate(58 0)" fill="#ffffff" stroke="#000" stroke-width="1.2" stroke-dasharray="2 1"/>
<path d="M559.5 86.5 L564.5 91" fill="none" stroke="#ffff00" stroke-width="1.5" />
<path d="M553 77 L556 80 H554 V82 H556 L553 85 L550 82 H552 V80 H550 Z" fill="#0000ff"/>
<path d="M576.5 79.5 H578 L580 82 V77 Q580 75 581.5 75 Q583 75 583 77 V76 Q583 74.5 584.5 74.5 Q586 74.5 586 76 V77 Q586 76 587.5 76 Q589 76 589.5 78 Q590.5 80 590.5 84 V86 L589 89.5 H581 L578 85.5 L576.5 81.5 Z" fill="#ffffff" stroke="#000" stroke-width="1.2"/>
<rect x="575" y="79" width="3" height="2" fill="#000000" />
<rect x="583" y="77" width="1" height="5" fill="#000000" />
<rect x="586" y="77" width="1" height="5" fill="#000000" />
<rect x="588" y="79" width="1" height="4" fill="#000000" />
<rect x="581" y="90" width="9" height="3" fill="#000080" />
<path d="M618.6 77 H620 L624.6 88.6 H626 V90 H621 V88.6 H622 L621 86 H616.5 L615.6 88.6 H616.8 V90 H613 V88.6 H614.2 Z M617 84.5 H620.4 L618.9 80.4 Z" fill="#000" fill-rule="evenodd"/>
<rect x="616" y="84" width="2" height="2" fill="#000080" />
<rect x="617" y="80" width="1" height="1" fill="#a0a0a0" />
<circle cx="641" cy="75.8" r="0.9" fill="#000"/>
<circle cx="656.8" cy="75.8" r="0.9" fill="#000"/>
<path d="M641 76.5 Q639.6 78 639.6 80.5 Q639.6 83 641 84.5" fill="none" stroke="#000000" stroke-width="1.2" />
<path d="M656.8 76.5 Q658.2 78 658.2 80.5 Q658.2 83 656.8 84.5" fill="none" stroke="#000000" stroke-width="1.2" />
<path d="M645.5 78 L643 83 M643.2 78.2 L645.8 83" fill="none" stroke="#000000" stroke-width="1.1" />
<path d="M645.2 77.9 H647.5" fill="none" stroke="#000000" stroke-width="1" />
<path d="M648.4 81.8 L647.3 83.4" fill="none" stroke="#000000" stroke-width="1.1" />
<path d="M651 77.5 V81.8 M654 77.5 L653.6 81 L650.3 84.6 H649.5" fill="none" stroke="#000000" stroke-width="1.1" />
<path d="M644.6 85.6 L641.6 89.5" fill="none" stroke="#000000" stroke-width="1.2" />
<circle cx="640.6" cy="90.6" r="1.3" fill="none" stroke="#000" stroke-width="1.2"/>
<path d="M674.5 89.5 L676.5 88 L678 86.5 L679.5 83.5 L681.5 81.5 L684 78.5 L685.5 77 L687 77 L688 78.5 L688.5 81.5 L690 83.5 L691.5 85" fill="none" stroke="#0000ff" stroke-width="1.2" />
<rect x="680" y="80" width="3" height="3" fill="#0000ff" />
<rect x="690" y="84" width="2" height="3" fill="#0000ff" />
<path d="M675.5 83 L677 80.5 L678.5 79.5 L680 80 L682 82 L683 85 L684.5 87 L686.5 87.5 L688 86.5 L688.5 84 L689.5 81 L690.5 79.5 L692 79.5" fill="none" stroke="#ff0000" stroke-width="1.1" />
<rect x="675" y="82" width="2" height="2" fill="#ff0000" />
<rect x="703" y="75" width="9" height="9" fill="#000000" />
<rect x="704" y="77" width="5" height="1" fill="#ffffff" />
<rect x="704" y="79" width="7" height="1" fill="#ffffff" />
<rect x="704" y="82" width="7" height="1" fill="#ffffff" />
<rect x="709" y="75" width="2" height="2" fill="#ffffff" />
<rect x="703" y="85" width="8" height="8" fill="#000000" />
<rect x="704" y="87" width="4" height="1" fill="#ffffff" />
<rect x="704" y="89" width="4" height="1" fill="#ffffff" />
<rect x="708" y="86" width="2" height="2" fill="#ffffff" />
<path d="M712 79.5 H716.5 V92.5 H712" fill="none" stroke="#ff0000" stroke-width="1.2" />
<path d="M717 83 L722 86 L717 89 Z" fill="#ff0000"/>
<rect x="716" y="85" width="3" height="2" fill="#ff0000" />
<path d="M741.5 74.5 H751.5 L756.5 79.5 V92.5 H741.5 Z" fill="#ffffff" stroke="#000" stroke-width="1.2"/>
<rect x="744" y="75" width="1" height="17" fill="#b0b0b0" />
<rect x="748" y="79" width="1" height="13" fill="#c0c0c0" />
<rect x="752" y="80" width="1" height="12" fill="#c0c0c0" />
<rect x="742" y="81" width="14" height="1" fill="#b0b0b0" />
<rect x="742" y="85" width="14" height="1" fill="#c0c0c0" />
<rect x="742" y="89" width="14" height="1" fill="#c0c0c0" />
<path d="M751.5 74.5 V79.5 H756.5" fill="none" stroke="#000000" stroke-width="1.1" />
<path d="M737.5 78.5 L742 83.5 L737.5 88.5 Z" fill="#00ffff" stroke="#000080" stroke-width="1.2"/>
<path d="M770.5 74.5 H780.5 L785.5 79.5 V92.5 H770.5 Z" fill="#ffffff" stroke="#000" stroke-width="1.2"/>
<path d="M780.5 74.5 V79.5 H785.5" fill="none" stroke="#000000" stroke-width="1.1" />
<path d="M766.5 78.5 L771 83.5 L766.5 88.5 Z" fill="#00ffff" stroke="#000080" stroke-width="1.2"/>
<rect x="771" y="80" width="2" height="2" fill="#ff0000" />
<rect x="771" y="87" width="2" height="1" fill="#0000ff" />
<rect x="783" y="84" width="3" height="1" fill="#ff0000" />
<path d="M773.5 79 L783 84.5 L773.5 90 Z" fill="#ffff00" stroke="#808000" stroke-width="1.3"/>
<path d="M777 83 V86.5 M775.5 84.5 H778.5" fill="none" stroke="#000000" stroke-width="1" />
<rect x="805" y="78" width="12" height="11" fill="#a0a0a0" />
<path d="M1383.5 244.5 V6 A5.5 5.5 0 0 1 1389 0.5 H1739 A5.5 5.5 0 0 1 1744.5 6 V244.5 A5.5 5.5 0 0 1 1739 250 H1389 A5.5 5.5 0 0 1 1383.5 244.5 Z" fill="#ffffff" stroke="#a0a0a0" stroke-width="1"/>
<path d="M1384 38 V6 A5 5 0 0 1 1389 1 H1739 A5 5 0 0 1 1744 6 V38 Z" fill="#eef3fa"/>
<text x="1393.76" y="25" font-family="Liberation Sans" font-size="15" fill="#1a1a1a" textLength="43.48" lengthAdjust="spacingAndGlyphs" >Cursor</text>
<rect x="1718" y="9" width="25" height="25" fill="#c84f4f" />
<path d="M1727.5 18.5 L1733.5 23.5 M1733.5 18.5 L1727.5 23.5" stroke="#ffffff" stroke-width="1.9"/>
<text x="1518" y="52" font-family="Liberation Mono" font-size="13.8" fill="#000" textLength="40" lengthAdjust="spacingAndGlyphs">V(1)</text>
<text x="1650.5" y="52" font-family="Liberation Mono" font-size="13.8" fill="#000" textLength="40" lengthAdjust="spacingAndGlyphs">V(4)</text>
<rect x="1480" y="60" width="120" height="1" fill="#ff0000" />
<rect x="1612" y="60" width="120" height="1" fill="#00b400" />
<text x="1508" y="78" font-family="Liberation Mono" font-size="13.8" fill="#000" textLength="60" lengthAdjust="spacingAndGlyphs">V(TK1)</text>
<text x="1640.5" y="78" font-family="Liberation Mono" font-size="13.8" fill="#000" textLength="60" lengthAdjust="spacingAndGlyphs">V(TK2)</text>
<text x="1384" y="115" font-family="Liberation Mono" font-size="13.8" fill="#000" textLength="20" lengthAdjust="spacingAndGlyphs">x1</text>
<text x="1540" y="115" font-family="Liberation Mono" font-size="13.8" fill="#000" textLength="60" lengthAdjust="spacingAndGlyphs">1.0000</text>
<text x="1672" y="115" font-family="Liberation Mono" font-size="13.8" fill="#000" textLength="60" lengthAdjust="spacingAndGlyphs">1.0000</text>
<text x="1384" y="133" font-family="Liberation Mono" font-size="13.8" fill="#000" textLength="20" lengthAdjust="spacingAndGlyphs">y1</text>
<text x="1540" y="133" font-family="Liberation Mono" font-size="13.8" fill="#000" textLength="60" lengthAdjust="spacingAndGlyphs">1.0000</text>
<text x="1662" y="133" font-family="Liberation Mono" font-size="13.8" fill="#000" textLength="70" lengthAdjust="spacingAndGlyphs">21.9973</text>
<text x="1384" y="151" font-family="Liberation Mono" font-size="13.8" fill="#000" textLength="20" lengthAdjust="spacingAndGlyphs">x2</text>
<text x="1540" y="151" font-family="Liberation Mono" font-size="13.8" fill="#000" textLength="60" lengthAdjust="spacingAndGlyphs">9.5209</text>
<text x="1672" y="151" font-family="Liberation Mono" font-size="13.8" fill="#000" textLength="60" lengthAdjust="spacingAndGlyphs">9.5209</text>
<text x="1384" y="169" font-family="Liberation Mono" font-size="13.8" fill="#000" textLength="20" lengthAdjust="spacingAndGlyphs">y2</text>
<text x="1540" y="169" font-family="Liberation Mono" font-size="13.8" fill="#000" textLength="60" lengthAdjust="spacingAndGlyphs">1.0000</text>
<text x="1662" y="169" font-family="Liberation Mono" font-size="13.8" fill="#000" textLength="70" lengthAdjust="spacingAndGlyphs">21.9973</text>
<text x="1384" y="187" font-family="Liberation Mono" font-size="13.8" fill="#000" textLength="20" lengthAdjust="spacingAndGlyphs">dx</text>
<text x="1540" y="187" font-family="Liberation Mono" font-size="13.8" fill="#000" textLength="60" lengthAdjust="spacingAndGlyphs">8.5209</text>
<text x="1672" y="187" font-family="Liberation Mono" font-size="13.8" fill="#000" textLength="60" lengthAdjust="spacingAndGlyphs">8.5209</text>
<text x="1384" y="205" font-family="Liberation Mono" font-size="13.8" fill="#000" textLength="20" lengthAdjust="spacingAndGlyphs">dy</text>
<text x="1540" y="205" font-family="Liberation Mono" font-size="13.8" fill="#000" textLength="60" lengthAdjust="spacingAndGlyphs">0.0000</text>
<text x="1642" y="205" font-family="Liberation Mono" font-size="13.8" fill="#000" textLength="90" lengthAdjust="spacingAndGlyphs">-39.0102n</text>
<text x="1384" y="223" font-family="Liberation Mono" font-size="13.8" fill="#000" textLength="50" lengthAdjust="spacingAndGlyphs">dy/dx</text>
<text x="1540" y="223" font-family="Liberation Mono" font-size="13.8" fill="#000" textLength="60" lengthAdjust="spacingAndGlyphs">0.0000</text>
<text x="1652" y="223" font-family="Liberation Mono" font-size="13.8" fill="#000" textLength="80" lengthAdjust="spacingAndGlyphs">-4.5782n</text>
<text x="1384" y="241" font-family="Liberation Mono" font-size="13.8" fill="#000" textLength="40" lengthAdjust="spacingAndGlyphs">1/dx</text>
<text x="1510" y="241" font-family="Liberation Mono" font-size="13.8" fill="#000" textLength="90" lengthAdjust="spacingAndGlyphs">117.3588m</text>
<text x="1642" y="241" font-family="Liberation Mono" font-size="13.8" fill="#000" textLength="90" lengthAdjust="spacingAndGlyphs">117.3588m</text>
</svg>
</body></html>
